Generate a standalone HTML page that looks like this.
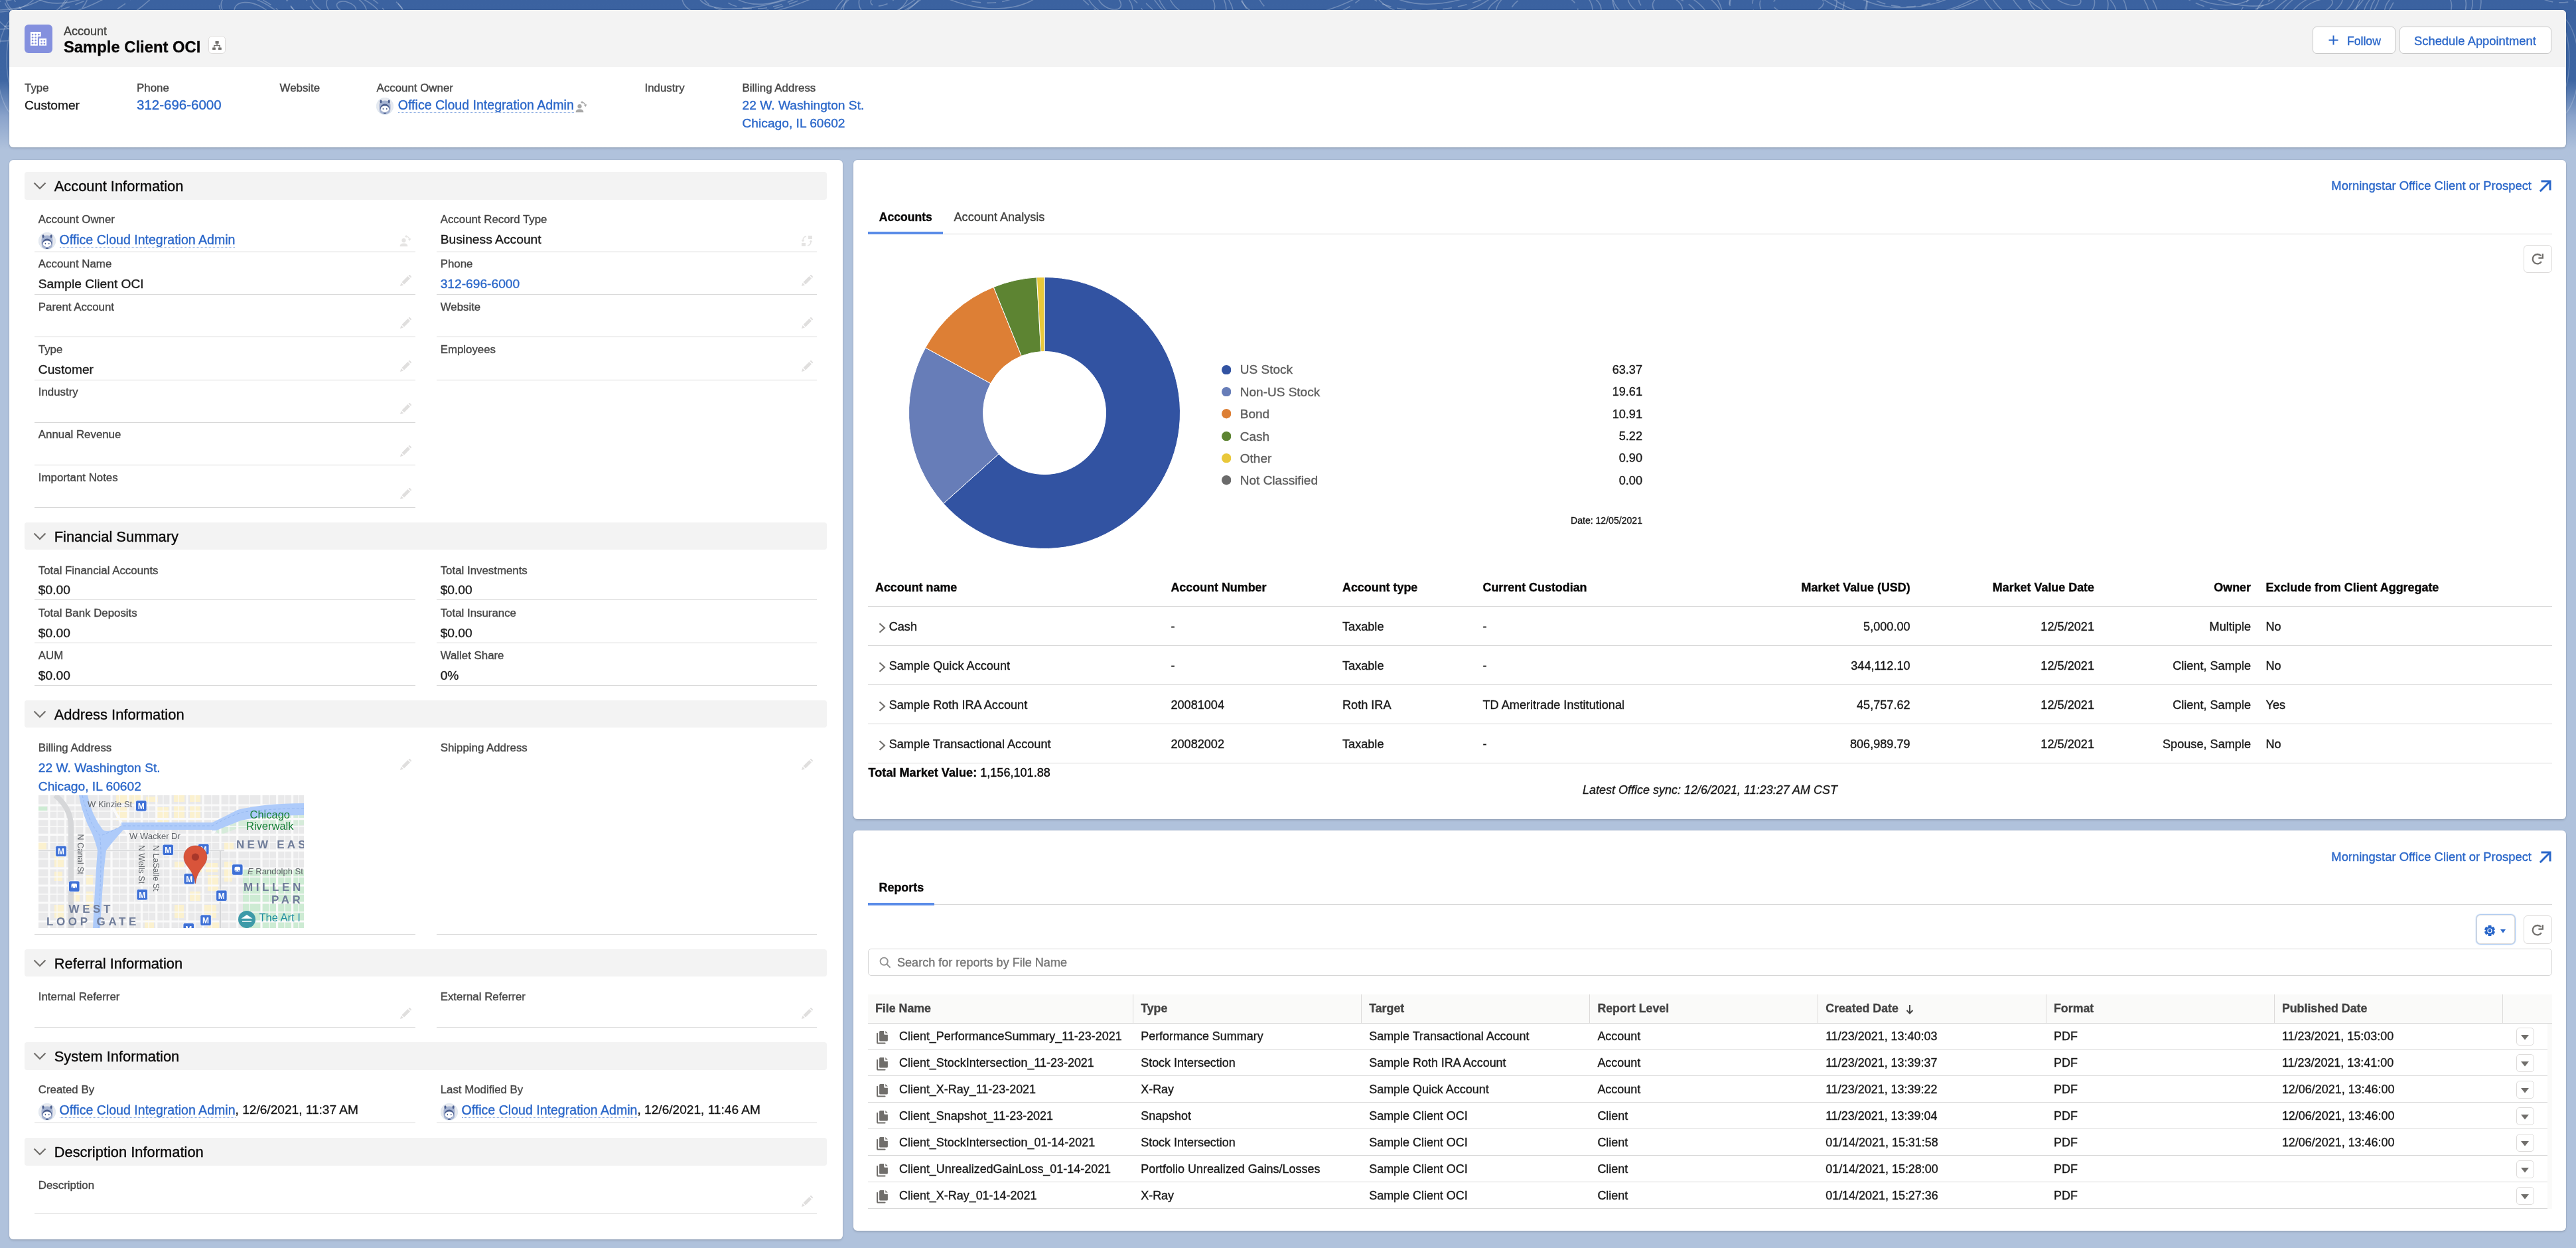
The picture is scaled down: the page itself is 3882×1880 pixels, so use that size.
<!DOCTYPE html><html><head><meta charset="utf-8"><style>
html,body{margin:0;padding:0;}
body{width:3882px;height:1880px;overflow:hidden;position:relative;font-family:"Liberation Sans",sans-serif;
background:linear-gradient(180deg,#3b62a0 0px,#3d65a2 120px,#8aa3cb 175px,#b0c2dc 225px,#b0c2dc 1880px);}
.r{position:absolute;}
.t{position:absolute;white-space:nowrap;-webkit-text-stroke:0.35px currentColor;}
.card{position:absolute;background:#fff;border-radius:6px;box-shadow:0 0 0 1px rgba(0,0,0,0.05),0 2px 3px rgba(0,0,0,0.12);}
</style></head><body><div id="wrap" style="position:absolute;left:0;top:0;width:3882px;height:1880px;will-change:transform;">
<svg class="r" style="left:0px;top:0px;" width="3882" height="240" viewBox="0 0 3882 240"><ellipse cx="0" cy="-15" rx="40" ry="17" transform="rotate(-3 0 -15)" fill="none" stroke="rgba(255,255,255,0.26)" stroke-width="1.6" stroke-dasharray="14 9"/><ellipse cx="0" cy="-15" rx="58" ry="33" transform="rotate(-3 0 -15)" fill="none" stroke="rgba(255,255,255,0.26)" stroke-width="1.6"/><ellipse cx="0" cy="-15" rx="75" ry="30" transform="rotate(-3 0 -15)" fill="none" stroke="rgba(255,255,255,0.26)" stroke-width="1.6"/><ellipse cx="0" cy="-15" rx="104" ry="59" transform="rotate(-3 0 -15)" fill="none" stroke="rgba(255,255,255,0.26)" stroke-width="1.6"/><ellipse cx="0" cy="-15" rx="109" ry="55" transform="rotate(-3 0 -15)" fill="none" stroke="rgba(255,255,255,0.26)" stroke-width="1.6" stroke-dasharray="14 9"/><ellipse cx="0" cy="-15" rx="136" ry="77" transform="rotate(-3 0 -15)" fill="none" stroke="rgba(255,255,255,0.26)" stroke-width="1.6" stroke-dasharray="14 9"/><ellipse cx="129" cy="-56" rx="55" ry="28" transform="rotate(-28 129 -56)" fill="none" stroke="rgba(255,255,255,0.26)" stroke-width="1.6" stroke-dasharray="14 9"/><ellipse cx="129" cy="-56" rx="73" ry="42" transform="rotate(-28 129 -56)" fill="none" stroke="rgba(255,255,255,0.26)" stroke-width="1.6"/><ellipse cx="129" cy="-56" rx="93" ry="48" transform="rotate(-28 129 -56)" fill="none" stroke="rgba(255,255,255,0.26)" stroke-width="1.6"/><ellipse cx="129" cy="-56" rx="121" ry="84" transform="rotate(-28 129 -56)" fill="none" stroke="rgba(255,255,255,0.26)" stroke-width="1.6" stroke-dasharray="14 9"/><ellipse cx="129" cy="-56" rx="133" ry="61" transform="rotate(-28 129 -56)" fill="none" stroke="rgba(255,255,255,0.26)" stroke-width="1.6"/><ellipse cx="129" cy="-56" rx="136" ry="51" transform="rotate(-28 129 -56)" fill="none" stroke="rgba(255,255,255,0.26)" stroke-width="1.6" stroke-dasharray="14 9"/><ellipse cx="129" cy="-56" rx="158" ry="102" transform="rotate(-28 129 -56)" fill="none" stroke="rgba(255,255,255,0.26)" stroke-width="1.6"/><ellipse cx="383" cy="25" rx="15" ry="7" transform="rotate(26 383 25)" fill="none" stroke="rgba(255,255,255,0.26)" stroke-width="1.6" stroke-dasharray="14 9"/><ellipse cx="383" cy="25" rx="32" ry="18" transform="rotate(26 383 25)" fill="none" stroke="rgba(255,255,255,0.26)" stroke-width="1.6"/><ellipse cx="383" cy="25" rx="54" ry="25" transform="rotate(26 383 25)" fill="none" stroke="rgba(255,255,255,0.26)" stroke-width="1.6"/><ellipse cx="383" cy="25" rx="57" ry="28" transform="rotate(26 383 25)" fill="none" stroke="rgba(255,255,255,0.26)" stroke-width="1.6" stroke-dasharray="14 9"/><ellipse cx="522" cy="11" rx="15" ry="8" transform="rotate(18 522 11)" fill="none" stroke="rgba(255,255,255,0.26)" stroke-width="1.6"/><ellipse cx="522" cy="11" rx="31" ry="19" transform="rotate(18 522 11)" fill="none" stroke="rgba(255,255,255,0.26)" stroke-width="1.6"/><ellipse cx="522" cy="11" rx="54" ry="21" transform="rotate(18 522 11)" fill="none" stroke="rgba(255,255,255,0.26)" stroke-width="1.6"/><ellipse cx="522" cy="11" rx="63" ry="28" transform="rotate(18 522 11)" fill="none" stroke="rgba(255,255,255,0.26)" stroke-width="1.6" stroke-dasharray="14 9"/><ellipse cx="522" cy="11" rx="97" ry="44" transform="rotate(18 522 11)" fill="none" stroke="rgba(255,255,255,0.26)" stroke-width="1.6" stroke-dasharray="14 9"/><ellipse cx="522" cy="11" rx="94" ry="46" transform="rotate(18 522 11)" fill="none" stroke="rgba(255,255,255,0.26)" stroke-width="1.6" stroke-dasharray="14 9"/><ellipse cx="732" cy="-50" rx="60" ry="34" transform="rotate(-4 732 -50)" fill="none" stroke="rgba(255,255,255,0.26)" stroke-width="1.6" stroke-dasharray="14 9"/><ellipse cx="732" cy="-50" rx="77" ry="29" transform="rotate(-4 732 -50)" fill="none" stroke="rgba(255,255,255,0.26)" stroke-width="1.6"/><ellipse cx="732" cy="-50" rx="98" ry="35" transform="rotate(-4 732 -50)" fill="none" stroke="rgba(255,255,255,0.26)" stroke-width="1.6"/><ellipse cx="732" cy="-50" rx="116" ry="46" transform="rotate(-4 732 -50)" fill="none" stroke="rgba(255,255,255,0.26)" stroke-width="1.6"/><ellipse cx="968" cy="-46" rx="32" ry="18" transform="rotate(-11 968 -46)" fill="none" stroke="rgba(255,255,255,0.26)" stroke-width="1.6" stroke-dasharray="14 9"/><ellipse cx="968" cy="-46" rx="48" ry="27" transform="rotate(-11 968 -46)" fill="none" stroke="rgba(255,255,255,0.26)" stroke-width="1.6"/><ellipse cx="968" cy="-46" rx="71" ry="35" transform="rotate(-11 968 -46)" fill="none" stroke="rgba(255,255,255,0.26)" stroke-width="1.6"/><ellipse cx="968" cy="-46" rx="76" ry="28" transform="rotate(-11 968 -46)" fill="none" stroke="rgba(255,255,255,0.26)" stroke-width="1.6"/><ellipse cx="1160" cy="-34" rx="48" ry="27" transform="rotate(-15 1160 -34)" fill="none" stroke="rgba(255,255,255,0.26)" stroke-width="1.6"/><ellipse cx="1160" cy="-34" rx="64" ry="38" transform="rotate(-15 1160 -34)" fill="none" stroke="rgba(255,255,255,0.26)" stroke-width="1.6"/><ellipse cx="1160" cy="-34" rx="80" ry="44" transform="rotate(-15 1160 -34)" fill="none" stroke="rgba(255,255,255,0.26)" stroke-width="1.6" stroke-dasharray="14 9"/><ellipse cx="1160" cy="-34" rx="105" ry="47" transform="rotate(-15 1160 -34)" fill="none" stroke="rgba(255,255,255,0.26)" stroke-width="1.6" stroke-dasharray="14 9"/><ellipse cx="1160" cy="-34" rx="111" ry="39" transform="rotate(-15 1160 -34)" fill="none" stroke="rgba(255,255,255,0.26)" stroke-width="1.6"/><ellipse cx="1160" cy="-34" rx="136" ry="51" transform="rotate(-15 1160 -34)" fill="none" stroke="rgba(255,255,255,0.26)" stroke-width="1.6"/><ellipse cx="1332" cy="-3" rx="21" ry="10" transform="rotate(-22 1332 -3)" fill="none" stroke="rgba(255,255,255,0.26)" stroke-width="1.6" stroke-dasharray="14 9"/><ellipse cx="1332" cy="-3" rx="39" ry="27" transform="rotate(-22 1332 -3)" fill="none" stroke="rgba(255,255,255,0.26)" stroke-width="1.6"/><ellipse cx="1332" cy="-3" rx="64" ry="33" transform="rotate(-22 1332 -3)" fill="none" stroke="rgba(255,255,255,0.26)" stroke-width="1.6"/><ellipse cx="1332" cy="-3" rx="70" ry="25" transform="rotate(-22 1332 -3)" fill="none" stroke="rgba(255,255,255,0.26)" stroke-width="1.6"/><ellipse cx="1332" cy="-3" rx="79" ry="30" transform="rotate(-22 1332 -3)" fill="none" stroke="rgba(255,255,255,0.26)" stroke-width="1.6"/><ellipse cx="1471" cy="-53" rx="35" ry="22" transform="rotate(14 1471 -53)" fill="none" stroke="rgba(255,255,255,0.26)" stroke-width="1.6" stroke-dasharray="14 9"/><ellipse cx="1471" cy="-53" rx="56" ry="37" transform="rotate(14 1471 -53)" fill="none" stroke="rgba(255,255,255,0.26)" stroke-width="1.6"/><ellipse cx="1471" cy="-53" rx="74" ry="49" transform="rotate(14 1471 -53)" fill="none" stroke="rgba(255,255,255,0.26)" stroke-width="1.6" stroke-dasharray="14 9"/><ellipse cx="1471" cy="-53" rx="87" ry="55" transform="rotate(14 1471 -53)" fill="none" stroke="rgba(255,255,255,0.26)" stroke-width="1.6" stroke-dasharray="14 9"/><ellipse cx="1471" cy="-53" rx="110" ry="62" transform="rotate(14 1471 -53)" fill="none" stroke="rgba(255,255,255,0.26)" stroke-width="1.6"/><ellipse cx="1672" cy="1" rx="19" ry="11" transform="rotate(30 1672 1)" fill="none" stroke="rgba(255,255,255,0.26)" stroke-width="1.6"/><ellipse cx="1672" cy="1" rx="38" ry="21" transform="rotate(30 1672 1)" fill="none" stroke="rgba(255,255,255,0.26)" stroke-width="1.6"/><ellipse cx="1672" cy="1" rx="60" ry="23" transform="rotate(30 1672 1)" fill="none" stroke="rgba(255,255,255,0.26)" stroke-width="1.6" stroke-dasharray="14 9"/><ellipse cx="1796" cy="0" rx="37" ry="23" transform="rotate(27 1796 0)" fill="none" stroke="rgba(255,255,255,0.26)" stroke-width="1.6"/><ellipse cx="1796" cy="0" rx="55" ry="36" transform="rotate(27 1796 0)" fill="none" stroke="rgba(255,255,255,0.26)" stroke-width="1.6"/><ellipse cx="1796" cy="0" rx="67" ry="38" transform="rotate(27 1796 0)" fill="none" stroke="rgba(255,255,255,0.26)" stroke-width="1.6"/><ellipse cx="1796" cy="0" rx="97" ry="45" transform="rotate(27 1796 0)" fill="none" stroke="rgba(255,255,255,0.26)" stroke-width="1.6" stroke-dasharray="14 9"/><ellipse cx="1986" cy="-36" rx="33" ry="21" transform="rotate(-18 1986 -36)" fill="none" stroke="rgba(255,255,255,0.26)" stroke-width="1.6" stroke-dasharray="14 9"/><ellipse cx="1986" cy="-36" rx="54" ry="26" transform="rotate(-18 1986 -36)" fill="none" stroke="rgba(255,255,255,0.26)" stroke-width="1.6"/><ellipse cx="1986" cy="-36" rx="66" ry="26" transform="rotate(-18 1986 -36)" fill="none" stroke="rgba(255,255,255,0.26)" stroke-width="1.6"/><ellipse cx="1986" cy="-36" rx="95" ry="62" transform="rotate(-18 1986 -36)" fill="none" stroke="rgba(255,255,255,0.26)" stroke-width="1.6" stroke-dasharray="14 9"/><ellipse cx="1986" cy="-36" rx="120" ry="53" transform="rotate(-18 1986 -36)" fill="none" stroke="rgba(255,255,255,0.26)" stroke-width="1.6"/><ellipse cx="2169" cy="-32" rx="25" ry="14" transform="rotate(-7 2169 -32)" fill="none" stroke="rgba(255,255,255,0.26)" stroke-width="1.6" stroke-dasharray="14 9"/><ellipse cx="2169" cy="-32" rx="45" ry="26" transform="rotate(-7 2169 -32)" fill="none" stroke="rgba(255,255,255,0.26)" stroke-width="1.6"/><ellipse cx="2169" cy="-32" rx="66" ry="29" transform="rotate(-7 2169 -32)" fill="none" stroke="rgba(255,255,255,0.26)" stroke-width="1.6"/><ellipse cx="2169" cy="-32" rx="83" ry="37" transform="rotate(-7 2169 -32)" fill="none" stroke="rgba(255,255,255,0.26)" stroke-width="1.6"/><ellipse cx="2169" cy="-32" rx="101" ry="56" transform="rotate(-7 2169 -32)" fill="none" stroke="rgba(255,255,255,0.26)" stroke-width="1.6"/><ellipse cx="2169" cy="-32" rx="111" ry="46" transform="rotate(-7 2169 -32)" fill="none" stroke="rgba(255,255,255,0.26)" stroke-width="1.6" stroke-dasharray="14 9"/><ellipse cx="2327" cy="18" rx="51" ry="29" transform="rotate(-3 2327 18)" fill="none" stroke="rgba(255,255,255,0.26)" stroke-width="1.6" stroke-dasharray="14 9"/><ellipse cx="2327" cy="18" rx="73" ry="43" transform="rotate(-3 2327 18)" fill="none" stroke="rgba(255,255,255,0.26)" stroke-width="1.6"/><ellipse cx="2327" cy="18" rx="86" ry="36" transform="rotate(-3 2327 18)" fill="none" stroke="rgba(255,255,255,0.26)" stroke-width="1.6"/><ellipse cx="2513" cy="11" rx="23" ry="16" transform="rotate(17 2513 11)" fill="none" stroke="rgba(255,255,255,0.26)" stroke-width="1.6"/><ellipse cx="2513" cy="11" rx="45" ry="18" transform="rotate(17 2513 11)" fill="none" stroke="rgba(255,255,255,0.26)" stroke-width="1.6" stroke-dasharray="14 9"/><ellipse cx="2513" cy="11" rx="62" ry="27" transform="rotate(17 2513 11)" fill="none" stroke="rgba(255,255,255,0.26)" stroke-width="1.6"/><ellipse cx="2513" cy="11" rx="86" ry="42" transform="rotate(17 2513 11)" fill="none" stroke="rgba(255,255,255,0.26)" stroke-width="1.6"/><ellipse cx="2513" cy="11" rx="85" ry="56" transform="rotate(17 2513 11)" fill="none" stroke="rgba(255,255,255,0.26)" stroke-width="1.6"/><ellipse cx="2710" cy="5" rx="38" ry="16" transform="rotate(-2 2710 5)" fill="none" stroke="rgba(255,255,255,0.26)" stroke-width="1.6" stroke-dasharray="14 9"/><ellipse cx="2710" cy="5" rx="58" ry="33" transform="rotate(-2 2710 5)" fill="none" stroke="rgba(255,255,255,0.26)" stroke-width="1.6" stroke-dasharray="14 9"/><ellipse cx="2710" cy="5" rx="69" ry="46" transform="rotate(-2 2710 5)" fill="none" stroke="rgba(255,255,255,0.26)" stroke-width="1.6" stroke-dasharray="14 9"/><ellipse cx="2710" cy="5" rx="103" ry="55" transform="rotate(-2 2710 5)" fill="none" stroke="rgba(255,255,255,0.26)" stroke-width="1.6" stroke-dasharray="14 9"/><ellipse cx="2710" cy="5" rx="104" ry="69" transform="rotate(-2 2710 5)" fill="none" stroke="rgba(255,255,255,0.26)" stroke-width="1.6" stroke-dasharray="14 9"/><ellipse cx="2878" cy="-52" rx="35" ry="23" transform="rotate(-5 2878 -52)" fill="none" stroke="rgba(255,255,255,0.26)" stroke-width="1.6"/><ellipse cx="2878" cy="-52" rx="56" ry="28" transform="rotate(-5 2878 -52)" fill="none" stroke="rgba(255,255,255,0.26)" stroke-width="1.6"/><ellipse cx="2878" cy="-52" rx="71" ry="42" transform="rotate(-5 2878 -52)" fill="none" stroke="rgba(255,255,255,0.26)" stroke-width="1.6" stroke-dasharray="14 9"/><ellipse cx="2878" cy="-52" rx="88" ry="62" transform="rotate(-5 2878 -52)" fill="none" stroke="rgba(255,255,255,0.26)" stroke-width="1.6" stroke-dasharray="14 9"/><ellipse cx="2878" cy="-52" rx="107" ry="63" transform="rotate(-5 2878 -52)" fill="none" stroke="rgba(255,255,255,0.26)" stroke-width="1.6"/><ellipse cx="2878" cy="-52" rx="140" ry="77" transform="rotate(-5 2878 -52)" fill="none" stroke="rgba(255,255,255,0.26)" stroke-width="1.6"/><ellipse cx="2878" cy="-52" rx="155" ry="78" transform="rotate(-5 2878 -52)" fill="none" stroke="rgba(255,255,255,0.26)" stroke-width="1.6"/><ellipse cx="3115" cy="-4" rx="22" ry="10" transform="rotate(21 3115 -4)" fill="none" stroke="rgba(255,255,255,0.26)" stroke-width="1.6"/><ellipse cx="3115" cy="-4" rx="43" ry="29" transform="rotate(21 3115 -4)" fill="none" stroke="rgba(255,255,255,0.26)" stroke-width="1.6"/><ellipse cx="3115" cy="-4" rx="64" ry="44" transform="rotate(21 3115 -4)" fill="none" stroke="rgba(255,255,255,0.26)" stroke-width="1.6"/><ellipse cx="3115" cy="-4" rx="78" ry="33" transform="rotate(21 3115 -4)" fill="none" stroke="rgba(255,255,255,0.26)" stroke-width="1.6"/><ellipse cx="3115" cy="-4" rx="94" ry="53" transform="rotate(21 3115 -4)" fill="none" stroke="rgba(255,255,255,0.26)" stroke-width="1.6"/><ellipse cx="3115" cy="-4" rx="131" ry="70" transform="rotate(21 3115 -4)" fill="none" stroke="rgba(255,255,255,0.26)" stroke-width="1.6"/><ellipse cx="3115" cy="-4" rx="145" ry="79" transform="rotate(21 3115 -4)" fill="none" stroke="rgba(255,255,255,0.26)" stroke-width="1.6"/><ellipse cx="3332" cy="-53" rx="39" ry="19" transform="rotate(25 3332 -53)" fill="none" stroke="rgba(255,255,255,0.26)" stroke-width="1.6"/><ellipse cx="3332" cy="-53" rx="57" ry="27" transform="rotate(25 3332 -53)" fill="none" stroke="rgba(255,255,255,0.26)" stroke-width="1.6" stroke-dasharray="14 9"/><ellipse cx="3332" cy="-53" rx="82" ry="55" transform="rotate(25 3332 -53)" fill="none" stroke="rgba(255,255,255,0.26)" stroke-width="1.6"/><ellipse cx="3332" cy="-53" rx="84" ry="42" transform="rotate(25 3332 -53)" fill="none" stroke="rgba(255,255,255,0.26)" stroke-width="1.6"/><ellipse cx="3332" cy="-53" rx="104" ry="62" transform="rotate(25 3332 -53)" fill="none" stroke="rgba(255,255,255,0.26)" stroke-width="1.6" stroke-dasharray="14 9"/><ellipse cx="3332" cy="-53" rx="111" ry="45" transform="rotate(25 3332 -53)" fill="none" stroke="rgba(255,255,255,0.26)" stroke-width="1.6"/><ellipse cx="3491" cy="12" rx="26" ry="10" transform="rotate(-24 3491 12)" fill="none" stroke="rgba(255,255,255,0.26)" stroke-width="1.6"/><ellipse cx="3491" cy="12" rx="42" ry="18" transform="rotate(-24 3491 12)" fill="none" stroke="rgba(255,255,255,0.26)" stroke-width="1.6"/><ellipse cx="3491" cy="12" rx="61" ry="29" transform="rotate(-24 3491 12)" fill="none" stroke="rgba(255,255,255,0.26)" stroke-width="1.6"/><ellipse cx="3491" cy="12" rx="81" ry="33" transform="rotate(-24 3491 12)" fill="none" stroke="rgba(255,255,255,0.26)" stroke-width="1.6"/><ellipse cx="3491" cy="12" rx="102" ry="59" transform="rotate(-24 3491 12)" fill="none" stroke="rgba(255,255,255,0.26)" stroke-width="1.6"/><ellipse cx="3491" cy="12" rx="130" ry="73" transform="rotate(-24 3491 12)" fill="none" stroke="rgba(255,255,255,0.26)" stroke-width="1.6" stroke-dasharray="14 9"/><ellipse cx="3644" cy="14" rx="51" ry="35" transform="rotate(-11 3644 14)" fill="none" stroke="rgba(255,255,255,0.26)" stroke-width="1.6"/><ellipse cx="3644" cy="14" rx="73" ry="49" transform="rotate(-11 3644 14)" fill="none" stroke="rgba(255,255,255,0.26)" stroke-width="1.6"/><ellipse cx="3644" cy="14" rx="83" ry="50" transform="rotate(-11 3644 14)" fill="none" stroke="rgba(255,255,255,0.26)" stroke-width="1.6"/><ellipse cx="3644" cy="14" rx="96" ry="61" transform="rotate(-11 3644 14)" fill="none" stroke="rgba(255,255,255,0.26)" stroke-width="1.6"/><ellipse cx="3875" cy="-47" rx="33" ry="16" transform="rotate(-24 3875 -47)" fill="none" stroke="rgba(255,255,255,0.26)" stroke-width="1.6" stroke-dasharray="14 9"/><ellipse cx="3875" cy="-47" rx="50" ry="30" transform="rotate(-24 3875 -47)" fill="none" stroke="rgba(255,255,255,0.26)" stroke-width="1.6"/><ellipse cx="3875" cy="-47" rx="67" ry="47" transform="rotate(-24 3875 -47)" fill="none" stroke="rgba(255,255,255,0.26)" stroke-width="1.6" stroke-dasharray="14 9"/><ellipse cx="30" cy="90" rx="20" ry="60" fill="none" stroke="rgba(255,255,255,0.2)" stroke-width="1.5"/><ellipse cx="30" cy="100" rx="34" ry="78" fill="none" stroke="rgba(255,255,255,0.2)" stroke-width="1.5"/><ellipse cx="3852" cy="90" rx="20" ry="60" fill="none" stroke="rgba(255,255,255,0.2)" stroke-width="1.5"/><ellipse cx="3852" cy="100" rx="34" ry="78" fill="none" stroke="rgba(255,255,255,0.2)" stroke-width="1.5"/></svg>
<div class="card" style="left:14px;top:15px;width:3853px;height:207px;overflow:hidden;"><div style="position:absolute;left:0;top:0;right:0;height:86px;background:#f3f3f3;"></div></div>
<svg class="r" style="left:37px;top:37px;" width="42" height="43" viewBox="0 0 42 43"><rect x="0" y="0" width="42" height="43" rx="6" fill="#8490de"/><path d="M8.9 11 H24.7 V18 H19.9 V31.7 H8.9Z" fill="#fff"/><rect x="22.1" y="20.9" width="11" height="10.8" fill="#fff"/><circle cx="12.1" cy="15.1" r="1.35" fill="#8490de"/><circle cx="16.65" cy="15.1" r="1.35" fill="#8490de"/><circle cx="21.4" cy="15.1" r="1.35" fill="#8490de"/><circle cx="12.1" cy="19.5" r="1.35" fill="#8490de"/><circle cx="16.65" cy="19.5" r="1.35" fill="#8490de"/><circle cx="12.1" cy="23.9" r="1.35" fill="#8490de"/><circle cx="16.65" cy="23.9" r="1.35" fill="#8490de"/><circle cx="12.1" cy="28.3" r="1.35" fill="#8490de"/><circle cx="16.65" cy="28.3" r="1.35" fill="#8490de"/><circle cx="25.6" cy="24.5" r="1.35" fill="#8490de"/><circle cx="29.9" cy="24.5" r="1.35" fill="#8490de"/><circle cx="25.6" cy="28.8" r="1.35" fill="#8490de"/><circle cx="29.9" cy="28.8" r="1.35" fill="#8490de"/></svg>
<div class="t " style="left:96px;top:36.76px;font-size:18px;line-height:21.6px;color:#3e3e3c;">Account</div>
<div class="t " style="left:96px;top:57.27px;font-size:23.8px;line-height:28.56px;color:#080707;font-weight:bold;">Sample Client OCI</div>
<svg class="r" style="left:314px;top:54px;" width="26" height="27" viewBox="0 0 26 27"><rect x="0.5" y="0.5" width="25" height="26" rx="5" fill="#fff" stroke="#dddbda"/><g fill="#706e6b"><rect x="10.5" y="7.9" width="5.2" height="3.9" rx="0.6"/><rect x="6.1" y="17.4" width="4.8" height="3.6" rx="0.6"/><rect x="15" y="17.4" width="4.8" height="3.6" rx="0.6"/><rect x="12.3" y="11.5" width="1.5" height="2.6"/><rect x="8" y="13.9" width="9.8" height="1.4"/><rect x="8" y="13.9" width="1.4" height="3.6"/><rect x="16.4" y="13.9" width="1.4" height="3.6"/></g></svg>
<div class="r" style="left:3485px;top:40px;width:125px;height:41px;border:1px solid #c9c9c9;border-radius:6px;background:#fff;box-sizing:border-box;"></div>
<svg class="r" style="left:3508px;top:52px;" width="17" height="17" viewBox="0 0 17 17"><path d="M8.5 1.5v14M1.5 8.5h14" stroke="#2966c9" stroke-width="2"/></svg>
<div class="t " style="left:3537px;top:52.14px;font-size:17.6px;line-height:21.12px;color:#2966c9;">Follow</div>
<div class="r" style="left:3616px;top:40px;width:229px;height:41px;border:1px solid #c9c9c9;border-radius:6px;background:#fff;box-sizing:border-box;"></div>
<div class="t " style="left:3638px;top:51.42px;font-size:18.36px;line-height:22.03px;color:#2966c9;">Schedule Appointment</div>
<div class="t " style="left:37px;top:122.8px;font-size:16.9px;line-height:20.28px;color:#444444;">Type</div>
<div class="t " style="left:37px;top:147.67px;font-size:19.15px;line-height:22.98px;color:#181818;">Customer</div>
<div class="t " style="left:206px;top:122.8px;font-size:16.9px;line-height:20.28px;color:#444444;">Phone</div>
<div class="t " style="left:206px;top:146.4px;font-size:20.5px;line-height:24.6px;color:#2966c9;">312-696-6000</div>
<div class="t " style="left:421.5px;top:122.8px;font-size:16.9px;line-height:20.28px;color:#444444;">Website</div>
<div class="t " style="left:421.5px;top:147.67px;font-size:19.15px;line-height:22.98px;color:#181818;"></div>
<div class="t " style="left:567.5px;top:122.8px;font-size:16.9px;line-height:20.28px;color:#444444;">Account Owner</div>
<div class="t " style="left:971.5px;top:122.8px;font-size:16.9px;line-height:20.28px;color:#444444;">Industry</div>
<div class="t " style="left:971.5px;top:147.67px;font-size:19.15px;line-height:22.98px;color:#181818;"></div>
<div class="t " style="left:1118.5px;top:122.8px;font-size:16.9px;line-height:20.28px;color:#444444;">Billing Address</div>
<div class="t " style="left:1118.5px;top:146.83px;font-size:19.2px;line-height:23.04px;color:#2966c9;">22 W. Washington St.</div>
<div class="t " style="left:1118.5px;top:173.93px;font-size:19.2px;line-height:23.04px;color:#2966c9;">Chicago, IL 60602</div>
<svg class="r" style="left:567px;top:147px;" width="26" height="26" viewBox="0 0 26 26"><circle cx="13" cy="13" r="12.8" fill="#e6e9ef" stroke="#d5e3ee" stroke-width="0.5"/><path d="M4.5 11 Q4.5 4.5 13 4.5 Q21.5 4.5 21.5 11 L21.5 17 Q21.5 25 13 25 Q4.5 25 4.5 17Z" fill="#a6b4d2"/><ellipse cx="7" cy="5.8" rx="1.6" ry="2.6" fill="#4c5f8f"/><ellipse cx="19.2" cy="5.8" rx="1.6" ry="2.6" fill="#4c5f8f"/><ellipse cx="13" cy="16" rx="7" ry="6.5" fill="#4c5f8f"/><ellipse cx="13" cy="17.3" rx="6.3" ry="4.9" fill="#fff"/><ellipse cx="10.4" cy="17" rx="0.8" ry="1.2" fill="#4c5f8f"/><ellipse cx="15.8" cy="17" rx="0.8" ry="1.2" fill="#4c5f8f"/><path d="M10.5 25 Q13 21.5 15.5 25Z" fill="#4c5f8f"/></svg>
<div class="t " style="left:599.8px;top:147.28px;font-size:19.57px;line-height:23.48px;color:#2966c9;"><span style="border-bottom:1px dotted rgba(41,102,201,0.55);">Office Cloud Integration Admin</span></div>
<div class="card" style="left:14px;top:241px;width:1256px;height:1626px;"></div>
<svg class="r" style="left:866.5px;top:151.5px;" width="18" height="18" viewBox="0 0 18 18"><circle cx="6.5" cy="8.2" r="3.1" fill="#a8a8a8"/><path d="M0.6 17.2 Q0.6 12.6 6.5 12.6 Q12.4 12.6 12.4 17.2Z" fill="#a8a8a8"/><path d="M9.6 2 Q13.8 2.2 15.2 6.6" fill="none" stroke="#a8a8a8" stroke-width="1.7"/><path d="M12.9 6 L15.6 9 L17.4 5.3Z" fill="#a8a8a8"/><path d="M8 2.1 L10.6 -0.2 L10.6 4.3Z" fill="#a8a8a8"/></svg>
<div class="r" style="left:37px;top:259px;width:1209px;height:41.6px;background:#f3f3f3;border-radius:4px;"></div>
<svg class="r" style="left:50px;top:274px;display:none" width="20" height="13" viewBox="0 0 20 13"></svg>
<svg class="r" style="left:50px;top:273.8px;" width="20" height="13" viewBox="0 0 20 13"><path d="M1.5 1.5 L10 10 L18.5 1.5" fill="none" stroke="#706e6b" stroke-width="2.2"/></svg>
<div class="t " style="left:81.7px;top:267.77px;font-size:21.9px;line-height:26.28px;color:#080707;">Account Information</div>
<div class="r" style="left:52px;top:379px;width:574px;height:1px;background:#d8d8d8;"></div>
<div class="t " style="left:57.8px;top:320.95px;font-size:16.85px;line-height:20.22px;color:#444444;">Account Owner</div>
<svg class="r" style="left:57.9px;top:350px;" width="26" height="26" viewBox="0 0 26 26"><circle cx="13" cy="13" r="12.8" fill="#e6e9ef" stroke="#d5e3ee" stroke-width="0.5"/><path d="M4.5 11 Q4.5 4.5 13 4.5 Q21.5 4.5 21.5 11 L21.5 17 Q21.5 25 13 25 Q4.5 25 4.5 17Z" fill="#a6b4d2"/><ellipse cx="7" cy="5.8" rx="1.6" ry="2.6" fill="#4c5f8f"/><ellipse cx="19.2" cy="5.8" rx="1.6" ry="2.6" fill="#4c5f8f"/><ellipse cx="13" cy="16" rx="7" ry="6.5" fill="#4c5f8f"/><ellipse cx="13" cy="17.3" rx="6.3" ry="4.9" fill="#fff"/><ellipse cx="10.4" cy="17" rx="0.8" ry="1.2" fill="#4c5f8f"/><ellipse cx="15.8" cy="17" rx="0.8" ry="1.2" fill="#4c5f8f"/><path d="M10.5 25 Q13 21.5 15.5 25Z" fill="#4c5f8f"/></svg>
<div class="t " style="left:89.5px;top:349.78px;font-size:19.57px;line-height:23.48px;color:#2966c9;"><span style="border-bottom:1px dotted rgba(41,102,201,0.55);">Office Cloud Integration Admin</span></div>
<svg class="r" style="left:602px;top:353.5px;" width="18" height="18" viewBox="0 0 18 18"><circle cx="6.5" cy="8.2" r="3.1" fill="#e5e4e3"/><path d="M0.6 17.2 Q0.6 12.6 6.5 12.6 Q12.4 12.6 12.4 17.2Z" fill="#e5e4e3"/><path d="M9.6 2 Q13.8 2.2 15.2 6.6" fill="none" stroke="#e5e4e3" stroke-width="1.7"/><path d="M12.9 6 L15.6 9 L17.4 5.3Z" fill="#e5e4e3"/><path d="M8 2.1 L10.6 -0.2 L10.6 4.3Z" fill="#e5e4e3"/></svg>
<div class="r" style="left:658px;top:379px;width:573px;height:1px;background:#d8d8d8;"></div>
<div class="t " style="left:663.7px;top:320.95px;font-size:16.85px;line-height:20.22px;color:#444444;">Account Record Type</div>
<div class="t " style="left:663.7px;top:348.97px;font-size:19.26px;line-height:23.11px;color:#181818;">Business Account</div>
<svg class="r" style="left:1206.5px;top:353.5px;" width="18" height="18" viewBox="0 0 18 18"><rect x="11" y="1" width="6" height="5" fill="#e5e4e3"/><rect x="1" y="12" width="6" height="5" fill="#e5e4e3"/><path d="M8 2 Q3 3 3 8" fill="none" stroke="#e5e4e3" stroke-width="1.5"/><path d="M0.5 7.5 L3 10.5 L5.5 7.5Z" fill="#e5e4e3"/><path d="M10 16 Q15 15 15 10" fill="none" stroke="#e5e4e3" stroke-width="1.5"/><path d="M12.5 10.5 L15 7.5 L17.5 10.5Z" fill="#e5e4e3"/></svg>
<div class="r" style="left:52px;top:443px;width:574px;height:1px;background:#d8d8d8;"></div>
<div class="t " style="left:57.8px;top:388.45px;font-size:16.85px;line-height:20.22px;color:#444444;">Account Name</div>
<div class="t " style="left:57.8px;top:416.43px;font-size:19.2px;line-height:23.04px;color:#181818;">Sample Client OCI</div>
<svg class="r" style="left:602px;top:413.7px;" width="18" height="18" viewBox="0 0 18 18"><path d="M1 17 L2.5 12 L6 15.5 Z" fill="#e0dfde"/><path d="M3.5 11 L12.5 2 L16 5.5 L7 14.5 Z" fill="#e0dfde"/><path d="M13.5 1 L15 -0.5 L18.5 3 L17 4.5Z" fill="#e0dfde"/></svg>
<div class="r" style="left:52px;top:507px;width:574px;height:1px;background:#d8d8d8;"></div>
<div class="t " style="left:57.8px;top:452.75px;font-size:16.85px;line-height:20.22px;color:#444444;">Parent Account</div>
<svg class="r" style="left:602px;top:478.0px;" width="18" height="18" viewBox="0 0 18 18"><path d="M1 17 L2.5 12 L6 15.5 Z" fill="#e0dfde"/><path d="M3.5 11 L12.5 2 L16 5.5 L7 14.5 Z" fill="#e0dfde"/><path d="M13.5 1 L15 -0.5 L18.5 3 L17 4.5Z" fill="#e0dfde"/></svg>
<div class="r" style="left:52px;top:572px;width:574px;height:1px;background:#d8d8d8;"></div>
<div class="t " style="left:57.8px;top:517.25px;font-size:16.85px;line-height:20.22px;color:#444444;">Type</div>
<div class="t " style="left:57.8px;top:545.23px;font-size:19.2px;line-height:23.04px;color:#181818;">Customer</div>
<svg class="r" style="left:602px;top:542.5px;" width="18" height="18" viewBox="0 0 18 18"><path d="M1 17 L2.5 12 L6 15.5 Z" fill="#e0dfde"/><path d="M3.5 11 L12.5 2 L16 5.5 L7 14.5 Z" fill="#e0dfde"/><path d="M13.5 1 L15 -0.5 L18.5 3 L17 4.5Z" fill="#e0dfde"/></svg>
<div class="r" style="left:52px;top:636px;width:574px;height:1px;background:#d8d8d8;"></div>
<div class="t " style="left:57.8px;top:581.25px;font-size:16.85px;line-height:20.22px;color:#444444;">Industry</div>
<svg class="r" style="left:602px;top:606.5px;" width="18" height="18" viewBox="0 0 18 18"><path d="M1 17 L2.5 12 L6 15.5 Z" fill="#e0dfde"/><path d="M3.5 11 L12.5 2 L16 5.5 L7 14.5 Z" fill="#e0dfde"/><path d="M13.5 1 L15 -0.5 L18.5 3 L17 4.5Z" fill="#e0dfde"/></svg>
<div class="r" style="left:52px;top:700px;width:574px;height:1px;background:#d8d8d8;"></div>
<div class="t " style="left:57.8px;top:645.45px;font-size:16.85px;line-height:20.22px;color:#444444;">Annual Revenue</div>
<svg class="r" style="left:602px;top:670.7px;" width="18" height="18" viewBox="0 0 18 18"><path d="M1 17 L2.5 12 L6 15.5 Z" fill="#e0dfde"/><path d="M3.5 11 L12.5 2 L16 5.5 L7 14.5 Z" fill="#e0dfde"/><path d="M13.5 1 L15 -0.5 L18.5 3 L17 4.5Z" fill="#e0dfde"/></svg>
<div class="r" style="left:52px;top:764px;width:574px;height:1px;background:#d8d8d8;"></div>
<div class="t " style="left:57.8px;top:709.65px;font-size:16.85px;line-height:20.22px;color:#444444;">Important Notes</div>
<svg class="r" style="left:602px;top:734.9px;" width="18" height="18" viewBox="0 0 18 18"><path d="M1 17 L2.5 12 L6 15.5 Z" fill="#e0dfde"/><path d="M3.5 11 L12.5 2 L16 5.5 L7 14.5 Z" fill="#e0dfde"/><path d="M13.5 1 L15 -0.5 L18.5 3 L17 4.5Z" fill="#e0dfde"/></svg>
<div class="r" style="left:658px;top:443px;width:573px;height:1px;background:#d8d8d8;"></div>
<div class="t " style="left:663.7px;top:388.45px;font-size:16.85px;line-height:20.22px;color:#444444;">Phone</div>
<div class="t " style="left:663.7px;top:416.43px;font-size:19.2px;line-height:23.04px;color:#2966c9;">312-696-6000</div>
<svg class="r" style="left:1206.5px;top:413.7px;" width="18" height="18" viewBox="0 0 18 18"><path d="M1 17 L2.5 12 L6 15.5 Z" fill="#e0dfde"/><path d="M3.5 11 L12.5 2 L16 5.5 L7 14.5 Z" fill="#e0dfde"/><path d="M13.5 1 L15 -0.5 L18.5 3 L17 4.5Z" fill="#e0dfde"/></svg>
<div class="r" style="left:658px;top:507px;width:573px;height:1px;background:#d8d8d8;"></div>
<div class="t " style="left:663.7px;top:452.75px;font-size:16.85px;line-height:20.22px;color:#444444;">Website</div>
<svg class="r" style="left:1206.5px;top:478.0px;" width="18" height="18" viewBox="0 0 18 18"><path d="M1 17 L2.5 12 L6 15.5 Z" fill="#e0dfde"/><path d="M3.5 11 L12.5 2 L16 5.5 L7 14.5 Z" fill="#e0dfde"/><path d="M13.5 1 L15 -0.5 L18.5 3 L17 4.5Z" fill="#e0dfde"/></svg>
<div class="r" style="left:658px;top:572px;width:573px;height:1px;background:#d8d8d8;"></div>
<div class="t " style="left:663.7px;top:517.25px;font-size:16.85px;line-height:20.22px;color:#444444;">Employees</div>
<svg class="r" style="left:1206.5px;top:542.5px;" width="18" height="18" viewBox="0 0 18 18"><path d="M1 17 L2.5 12 L6 15.5 Z" fill="#e0dfde"/><path d="M3.5 11 L12.5 2 L16 5.5 L7 14.5 Z" fill="#e0dfde"/><path d="M13.5 1 L15 -0.5 L18.5 3 L17 4.5Z" fill="#e0dfde"/></svg>
<div class="r" style="left:37px;top:787.2px;width:1209px;height:41.3px;background:#f3f3f3;border-radius:4px;"></div>
<svg class="r" style="left:50px;top:274px;display:none" width="20" height="13" viewBox="0 0 20 13"></svg>
<svg class="r" style="left:50px;top:801.85px;" width="20" height="13" viewBox="0 0 20 13"><path d="M1.5 1.5 L10 10 L18.5 1.5" fill="none" stroke="#706e6b" stroke-width="2.2"/></svg>
<div class="t " style="left:81.7px;top:795.97px;font-size:21.9px;line-height:26.28px;color:#080707;">Financial Summary</div>
<div class="r" style="left:52px;top:903px;width:574px;height:1px;background:#d8d8d8;"></div>
<div class="t " style="left:57.8px;top:849.65px;font-size:16.85px;line-height:20.22px;color:#444444;">Total Financial Accounts</div>
<div class="t " style="left:57.8px;top:877.23px;font-size:19.2px;line-height:23.04px;color:#181818;">$0.00</div>
<div class="r" style="left:52px;top:968px;width:574px;height:1px;background:#d8d8d8;"></div>
<div class="t " style="left:57.8px;top:914.15px;font-size:16.85px;line-height:20.22px;color:#444444;">Total Bank Deposits</div>
<div class="t " style="left:57.8px;top:941.73px;font-size:19.2px;line-height:23.04px;color:#181818;">$0.00</div>
<div class="r" style="left:52px;top:1032px;width:574px;height:1px;background:#d8d8d8;"></div>
<div class="t " style="left:57.8px;top:978.15px;font-size:16.85px;line-height:20.22px;color:#444444;">AUM</div>
<div class="t " style="left:57.8px;top:1005.73px;font-size:19.2px;line-height:23.04px;color:#181818;">$0.00</div>
<div class="r" style="left:658px;top:903px;width:573px;height:1px;background:#d8d8d8;"></div>
<div class="t " style="left:663.7px;top:849.65px;font-size:16.85px;line-height:20.22px;color:#444444;">Total Investments</div>
<div class="t " style="left:663.7px;top:877.23px;font-size:19.2px;line-height:23.04px;color:#181818;">$0.00</div>
<div class="r" style="left:658px;top:968px;width:573px;height:1px;background:#d8d8d8;"></div>
<div class="t " style="left:663.7px;top:914.15px;font-size:16.85px;line-height:20.22px;color:#444444;">Total Insurance</div>
<div class="t " style="left:663.7px;top:941.73px;font-size:19.2px;line-height:23.04px;color:#181818;">$0.00</div>
<div class="r" style="left:658px;top:1032px;width:573px;height:1px;background:#d8d8d8;"></div>
<div class="t " style="left:663.7px;top:978.15px;font-size:16.85px;line-height:20.22px;color:#444444;">Wallet Share</div>
<div class="t " style="left:663.7px;top:1005.73px;font-size:19.2px;line-height:23.04px;color:#181818;">0%</div>
<div class="r" style="left:37px;top:1055.3px;width:1209px;height:41.0px;background:#f3f3f3;border-radius:4px;"></div>
<svg class="r" style="left:50px;top:274px;display:none" width="20" height="13" viewBox="0 0 20 13"></svg>
<svg class="r" style="left:50px;top:1069.8px;" width="20" height="13" viewBox="0 0 20 13"><path d="M1.5 1.5 L10 10 L18.5 1.5" fill="none" stroke="#706e6b" stroke-width="2.2"/></svg>
<div class="t " style="left:81.7px;top:1064.07px;font-size:21.9px;line-height:26.28px;color:#080707;">Address Information</div>
<div class="r" style="left:52px;top:1407px;width:574px;height:1px;background:#d8d8d8;"></div>
<div class="r" style="left:658px;top:1407px;width:573px;height:1px;background:#d8d8d8;"></div>
<div class="t " style="left:57.8px;top:1116.85px;font-size:16.85px;line-height:20.22px;color:#444444;">Billing Address</div>
<div class="t " style="left:663.7px;top:1116.85px;font-size:16.85px;line-height:20.22px;color:#444444;">Shipping Address</div>
<div class="t " style="left:57.8px;top:1144.93px;font-size:19.2px;line-height:23.04px;color:#2966c9;">22 W. Washington St.</div>
<div class="t " style="left:57.8px;top:1172.93px;font-size:19.2px;line-height:23.04px;color:#2966c9;">Chicago, IL 60602</div>
<svg class="r" style="left:602px;top:1142.5px;" width="18" height="18" viewBox="0 0 18 18"><path d="M1 17 L2.5 12 L6 15.5 Z" fill="#e0dfde"/><path d="M3.5 11 L12.5 2 L16 5.5 L7 14.5 Z" fill="#e0dfde"/><path d="M13.5 1 L15 -0.5 L18.5 3 L17 4.5Z" fill="#e0dfde"/></svg>
<svg class="r" style="left:1206.5px;top:1142.5px;" width="18" height="18" viewBox="0 0 18 18"><path d="M1 17 L2.5 12 L6 15.5 Z" fill="#e0dfde"/><path d="M3.5 11 L12.5 2 L16 5.5 L7 14.5 Z" fill="#e0dfde"/><path d="M13.5 1 L15 -0.5 L18.5 3 L17 4.5Z" fill="#e0dfde"/></svg>
<svg class="r" style="left:58px;top:1198px;" width="400" height="200" viewBox="0 0 400 200"><defs><clipPath id="mc"><rect width="400" height="200"/></clipPath></defs><g clip-path="url(#mc)"><rect width="400" height="200" fill="#e9e9ea"/><rect x="117" y="0" width="22" height="12" fill="#fbf1cf"/><rect x="140" y="0" width="18" height="12" fill="#fbf1cf"/><rect x="162" y="2" width="18" height="8" fill="#fbf1cf"/><rect x="117" y="18" width="20" height="20" fill="#fbf1cf"/><rect x="178" y="18" width="18" height="22" fill="#fbf1cf"/><rect x="120" y="22" width="12" height="12" fill="#fbf1cf"/><rect x="204" y="0" width="16" height="10" fill="#fbf1cf"/><rect x="204" y="14" width="16" height="24" fill="#fbf1cf"/><rect x="228" y="0" width="16" height="10" fill="#fbf1cf"/><rect x="228" y="14" width="16" height="24" fill="#fbf1cf"/><rect x="0" y="70" width="12" height="12" fill="#fbf1cf"/><rect x="24" y="86" width="14" height="22" fill="#fbf1cf"/><rect x="24" y="115" width="12" height="14" fill="#fbf1cf"/><rect x="48" y="140" width="14" height="20" fill="#fbf1cf"/><rect x="72" y="120" width="10" height="16" fill="#fbf1cf"/><rect x="72" y="145" width="10" height="24" fill="#fbf1cf"/><rect x="24" y="165" width="14" height="20" fill="#fbf1cf"/><rect x="205" y="100" width="14" height="12" fill="#fbf1cf"/><rect x="228" y="98" width="18" height="18" fill="#fbf1cf"/><rect x="252" y="102" width="18" height="14" fill="#fbf1cf"/><rect x="255" y="120" width="16" height="24" fill="#fbf1cf"/><rect x="228" y="145" width="16" height="14" fill="#fbf1cf"/><rect x="205" y="165" width="14" height="20" fill="#fbf1cf"/><rect x="250" y="165" width="18" height="20" fill="#fbf1cf"/><rect x="280" y="70" width="14" height="12" fill="#fbf1cf"/><rect x="280" y="100" width="12" height="30" fill="#fbf1cf"/><rect x="160" y="188" width="14" height="12" fill="#fbf1cf"/><rect x="255" y="190" width="20" height="10" fill="#fbf1cf"/><rect x="308" y="112" width="92" height="88" fill="#cdebd3"/><rect x="0" y="17" width="13" height="7" fill="#cdebd3"/><path d="M262 52 Q280 40 300 30 L400 25 L400 45 L300 50 Q285 55 275 60Z" fill="#cdebd3" opacity="0.7"/><g stroke="#fafafa" fill="none"><path d="M0 15 H400" stroke-width="3.2"/><path d="M0 35.6 H400" stroke-width="3.2"/><path d="M0 59.4 H400" stroke-width="3.2"/><path d="M0 83.2 H400" stroke-width="3.2"/><path d="M0 110 H400" stroke-width="3.2"/><path d="M0 136 H400" stroke-width="3.2"/><path d="M0 162 H400" stroke-width="3.2"/><path d="M0 190 H400" stroke-width="3.2"/><path d="M16 0 V200" stroke-width="3.2"/><path d="M40.5 0 V200" stroke-width="3.2"/><path d="M69 0 V200" stroke-width="3.2"/><path d="M110 0 V200" stroke-width="3.2"/><path d="M135 0 V200" stroke-width="3.2"/><path d="M155.5 0 V200" stroke-width="3.2"/><path d="M177.7 0 V200" stroke-width="3.2"/><path d="M199 0 V200" stroke-width="3.2"/><path d="M224 0 V200" stroke-width="3.2"/><path d="M248 0 V200" stroke-width="3.2"/><path d="M274 0 V200" stroke-width="3.2"/><path d="M299.7 0 V200" stroke-width="3.2"/><path d="M336 0 V200" stroke-width="3.2"/><path d="M359.6 0 V200" stroke-width="3.2"/><path d="M382.6 0 V200" stroke-width="3.2"/><path d="M0 24 H400" stroke-width="1.4"/><path d="M0 47 H400" stroke-width="1.4"/><path d="M0 71 H400" stroke-width="1.4"/><path d="M0 96 H400" stroke-width="1.4"/><path d="M0 123 H400" stroke-width="1.4"/><path d="M0 149 H400" stroke-width="1.4"/><path d="M0 176 H400" stroke-width="1.4"/><path d="M28 0 V200" stroke-width="1.2"/><path d="M55 0 V200" stroke-width="1.2"/><path d="M90 0 V200" stroke-width="1.2"/><path d="M122 0 V200" stroke-width="1.2"/><path d="M145 0 V200" stroke-width="1.2"/><path d="M166 0 V200" stroke-width="1.2"/><path d="M188 0 V200" stroke-width="1.2"/><path d="M211 0 V200" stroke-width="1.2"/><path d="M236 0 V200" stroke-width="1.2"/><path d="M261 0 V200" stroke-width="1.2"/><path d="M287 0 V200" stroke-width="1.2"/><path d="M318 0 V200" stroke-width="1.2"/><path d="M348 0 V200" stroke-width="1.2"/><path d="M371 0 V200" stroke-width="1.2"/><path d="M392 0 V200" stroke-width="1.2"/><path d="M110 15 L135 59 M262 59 Q275 35 300 34" stroke-width="4"/></g><path d="M25 0 Q50 20 49 50 L49 200" fill="none" stroke="#d6d7d9" stroke-width="8"/><path d="M274 83 V200" stroke="#d6d7d9" stroke-width="2.5"/><path d="M0 83.2 H280" stroke="#dadbdd" stroke-width="2"/><path d="M61 0 L74 0 Q80 30 97 52 Q104 58 125 46 L127 53 Q110 72 102 83 Q97 120 93 200 L82 200 Q86 120 89 83 Q84 62 74 44 Q64 20 61 0Z" fill="#aecbfa"/><path d="M125 41 H262 L262 52 H125Z" fill="#aecbfa"/><path d="M262 41 Q285 30 300 22 Q340 12 400 12 L400 30 Q340 30 305 38 Q285 46 268 53 L262 53Z" fill="#aecbfa"/><path d="M66 0 Q75 40 92 60 Q97 80 90 200 M96 60 Q110 55 125 46 H262 Q290 30 310 25 Q350 20 400 20" fill="none" stroke="#8fb3ee" stroke-width="0.8" stroke-dasharray="4 3"/><text x="74" y="18" font-size="13" fill="#5f6368" font-family="Liberation Sans">W Kinzie St</text><text x="137" y="66" font-size="13" fill="#5f6368" font-family="Liberation Sans">W Wacker Dr</text><text x="315" y="118.5" font-size="13" fill="#5f6368" font-family="Liberation Sans"><tspan font-style="italic">E</tspan> Randolph St</text><text x="59" y="58.6" font-size="12.5" fill="#5f6368" font-family="Liberation Sans" transform="rotate(90 59 58.6)">N Canal St</text><text x="150.5" y="75" font-size="12.5" fill="#5f6368" font-family="Liberation Sans" transform="rotate(90 150.5 75)">N Wells St</text><text x="172.5" y="75" font-size="12.5" fill="#5f6368" font-family="Liberation Sans" transform="rotate(90 172.5 75)">N LaSalle St</text><text x="318.5" y="34.8" font-size="16.5" fill="#188038" font-family="Liberation Sans">Chicago</text><text x="313" y="51.5" font-size="16.5" fill="#188038" font-family="Liberation Sans">Riverwalk</text><text x="332.5" y="190" font-size="16.5" fill="#1e8e9e" font-family="Liberation Sans">The Art I</text><text x="298" y="80" letter-spacing="4.2" font-size="17" fill="#6f7c99" font-weight="bold" font-family="Liberation Sans">NEW EAS</text><text x="309" y="144" letter-spacing="4.6" font-size="17" fill="#6f7c99" font-weight="bold" font-family="Liberation Sans">MILLENI</text><text x="351" y="163" letter-spacing="4.6" font-size="17" fill="#6f7c99" font-weight="bold" font-family="Liberation Sans">PAR</text><text x="45.5" y="177" letter-spacing="4.6" font-size="17" fill="#6f7c99" font-weight="bold" font-family="Liberation Sans">WEST</text><text x="12" y="195.7" letter-spacing="4.6" font-size="17" fill="#6f7c99" font-weight="bold" font-family="Liberation Sans">LOOP GATE</text><circle cx="314" cy="187" r="13" fill="#3d9aa8"/><path d="M307 190 H321 M308 185 H320 L314 181Z" stroke="#fff" stroke-width="1.5" fill="#fff"/><rect x="146.5" y="7.7" width="16.5" height="16.5" rx="2.5" fill="#3e70d6" stroke="#fff" stroke-width="0.8"/><text x="154.75" y="20.7" font-size="12" font-weight="bold" fill="#fff" text-anchor="middle" font-family="Liberation Sans">M</text><rect x="25.7" y="76" width="16.5" height="16.5" rx="2.5" fill="#3e70d6" stroke="#fff" stroke-width="0.8"/><text x="33.95" y="89" font-size="12" font-weight="bold" fill="#fff" text-anchor="middle" font-family="Liberation Sans">M</text><rect x="148" y="141.5" width="16.5" height="16.5" rx="2.5" fill="#3e70d6" stroke="#fff" stroke-width="0.8"/><text x="156.25" y="154.5" font-size="12" font-weight="bold" fill="#fff" text-anchor="middle" font-family="Liberation Sans">M</text><rect x="240.5" y="73" width="16.5" height="16.5" rx="2.5" fill="#3e70d6" stroke="#fff" stroke-width="0.8"/><text x="248.75" y="86" font-size="12" font-weight="bold" fill="#fff" text-anchor="middle" font-family="Liberation Sans">M</text><rect x="219" y="117.7" width="16.5" height="16.5" rx="2.5" fill="#3e70d6" stroke="#fff" stroke-width="0.8"/><text x="227.25" y="130.7" font-size="12" font-weight="bold" fill="#fff" text-anchor="middle" font-family="Liberation Sans">M</text><rect x="267.6" y="143" width="16.5" height="16.5" rx="2.5" fill="#3e70d6" stroke="#fff" stroke-width="0.8"/><text x="275.85" y="156" font-size="12" font-weight="bold" fill="#fff" text-anchor="middle" font-family="Liberation Sans">M</text><rect x="243.8" y="180" width="16.5" height="16.5" rx="2.5" fill="#3e70d6" stroke="#fff" stroke-width="0.8"/><text x="252.05" y="193" font-size="12" font-weight="bold" fill="#fff" text-anchor="middle" font-family="Liberation Sans">M</text><rect x="218" y="192.5" width="16.5" height="16.5" rx="2.5" fill="#3e70d6" stroke="#fff" stroke-width="0.8"/><text x="226.25" y="205.5" font-size="12" font-weight="bold" fill="#fff" text-anchor="middle" font-family="Liberation Sans">M</text><rect x="187" y="74" width="16.5" height="16.5" rx="2.5" fill="#3e70d6" stroke="#fff" stroke-width="0.8"/><text x="195.25" y="87" font-size="12" font-weight="bold" fill="#fff" text-anchor="middle" font-family="Liberation Sans">M</text><rect x="45.5" y="129" width="16.5" height="16.5" rx="2.5" fill="#3e70d6" stroke="#fff" stroke-width="0.8"/><rect x="49.5" y="133" width="8.5" height="7" rx="2" fill="#fff"/><circle cx="51.5" cy="138.5" r="0.9" fill="#3e70d6"/><circle cx="56.0" cy="138.5" r="0.9" fill="#3e70d6"/><rect x="291.5" y="103.8" width="16.5" height="16.5" rx="2.5" fill="#3e70d6" stroke="#fff" stroke-width="0.8"/><rect x="295.5" y="107.8" width="8.5" height="7" rx="2" fill="#fff"/><circle cx="297.5" cy="113.3" r="0.9" fill="#3e70d6"/><circle cx="302.0" cy="113.3" r="0.9" fill="#3e70d6"/><path d="M236.4 76 C226.5 76 219 83.5 219 93 C219 101 224 106 229 113 C233 119 235.5 125 236.4 133 C237.3 125 239.8 119 243.8 113 C248.8 106 253.8 101 253.8 93 C253.8 83.5 246.3 76 236.4 76Z" fill="#d9543a" stroke="#b33d2a" stroke-width="0.6"/><circle cx="236.4" cy="93" r="5.6" fill="#a8372a"/></g></svg>
<div class="r" style="left:37px;top:1430px;width:1209px;height:41.2px;background:#f3f3f3;border-radius:4px;"></div>
<svg class="r" style="left:50px;top:274px;display:none" width="20" height="13" viewBox="0 0 20 13"></svg>
<svg class="r" style="left:50px;top:1444.6px;" width="20" height="13" viewBox="0 0 20 13"><path d="M1.5 1.5 L10 10 L18.5 1.5" fill="none" stroke="#706e6b" stroke-width="2.2"/></svg>
<div class="t " style="left:81.7px;top:1438.77px;font-size:21.9px;line-height:26.28px;color:#080707;">Referral Information</div>
<div class="r" style="left:52px;top:1547px;width:574px;height:1px;background:#d8d8d8;"></div>
<div class="t " style="left:57.8px;top:1492.25px;font-size:16.85px;line-height:20.22px;color:#444444;">Internal Referrer</div>
<svg class="r" style="left:602px;top:1517.5px;" width="18" height="18" viewBox="0 0 18 18"><path d="M1 17 L2.5 12 L6 15.5 Z" fill="#e0dfde"/><path d="M3.5 11 L12.5 2 L16 5.5 L7 14.5 Z" fill="#e0dfde"/><path d="M13.5 1 L15 -0.5 L18.5 3 L17 4.5Z" fill="#e0dfde"/></svg>
<div class="r" style="left:658px;top:1547px;width:573px;height:1px;background:#d8d8d8;"></div>
<div class="t " style="left:663.7px;top:1492.25px;font-size:16.85px;line-height:20.22px;color:#444444;">External Referrer</div>
<svg class="r" style="left:1206.5px;top:1517.5px;" width="18" height="18" viewBox="0 0 18 18"><path d="M1 17 L2.5 12 L6 15.5 Z" fill="#e0dfde"/><path d="M3.5 11 L12.5 2 L16 5.5 L7 14.5 Z" fill="#e0dfde"/><path d="M13.5 1 L15 -0.5 L18.5 3 L17 4.5Z" fill="#e0dfde"/></svg>
<div class="r" style="left:37px;top:1570px;width:1209px;height:41.5px;background:#f3f3f3;border-radius:4px;"></div>
<svg class="r" style="left:50px;top:274px;display:none" width="20" height="13" viewBox="0 0 20 13"></svg>
<svg class="r" style="left:50px;top:1584.75px;" width="20" height="13" viewBox="0 0 20 13"><path d="M1.5 1.5 L10 10 L18.5 1.5" fill="none" stroke="#706e6b" stroke-width="2.2"/></svg>
<div class="t " style="left:81.7px;top:1578.77px;font-size:21.9px;line-height:26.28px;color:#080707;">System Information</div>
<div class="r" style="left:52px;top:1691px;width:574px;height:1px;background:#d8d8d8;"></div>
<div class="t " style="left:57.8px;top:1632.15px;font-size:16.85px;line-height:20.22px;color:#444444;">Created By</div>
<svg class="r" style="left:57.8px;top:1661.5px;" width="26" height="26" viewBox="0 0 26 26"><circle cx="13" cy="13" r="12.8" fill="#e6e9ef" stroke="#d5e3ee" stroke-width="0.5"/><path d="M4.5 11 Q4.5 4.5 13 4.5 Q21.5 4.5 21.5 11 L21.5 17 Q21.5 25 13 25 Q4.5 25 4.5 17Z" fill="#a6b4d2"/><ellipse cx="7" cy="5.8" rx="1.6" ry="2.6" fill="#4c5f8f"/><ellipse cx="19.2" cy="5.8" rx="1.6" ry="2.6" fill="#4c5f8f"/><ellipse cx="13" cy="16" rx="7" ry="6.5" fill="#4c5f8f"/><ellipse cx="13" cy="17.3" rx="6.3" ry="4.9" fill="#fff"/><ellipse cx="10.4" cy="17" rx="0.8" ry="1.2" fill="#4c5f8f"/><ellipse cx="15.8" cy="17" rx="0.8" ry="1.2" fill="#4c5f8f"/><path d="M10.5 25 Q13 21.5 15.5 25Z" fill="#4c5f8f"/></svg>
<div class="t " style="left:89.6px;top:1661.28px;font-size:19.57px;line-height:23.48px;color:#2966c9;"><span style="border-bottom:1px dotted rgba(41,102,201,0.55);">Office Cloud Integration Admin</span><span style="color:#181818;font-size:19.1px;position:relative;top:-1px;">, 12/6/2021, 11:37 AM</span></div>
<div class="r" style="left:658px;top:1691px;width:573px;height:1px;background:#d8d8d8;"></div>
<div class="t " style="left:663.7px;top:1632.15px;font-size:16.85px;line-height:20.22px;color:#444444;">Last Modified By</div>
<svg class="r" style="left:663.7px;top:1661.5px;" width="26" height="26" viewBox="0 0 26 26"><circle cx="13" cy="13" r="12.8" fill="#e6e9ef" stroke="#d5e3ee" stroke-width="0.5"/><path d="M4.5 11 Q4.5 4.5 13 4.5 Q21.5 4.5 21.5 11 L21.5 17 Q21.5 25 13 25 Q4.5 25 4.5 17Z" fill="#a6b4d2"/><ellipse cx="7" cy="5.8" rx="1.6" ry="2.6" fill="#4c5f8f"/><ellipse cx="19.2" cy="5.8" rx="1.6" ry="2.6" fill="#4c5f8f"/><ellipse cx="13" cy="16" rx="7" ry="6.5" fill="#4c5f8f"/><ellipse cx="13" cy="17.3" rx="6.3" ry="4.9" fill="#fff"/><ellipse cx="10.4" cy="17" rx="0.8" ry="1.2" fill="#4c5f8f"/><ellipse cx="15.8" cy="17" rx="0.8" ry="1.2" fill="#4c5f8f"/><path d="M10.5 25 Q13 21.5 15.5 25Z" fill="#4c5f8f"/></svg>
<div class="t " style="left:695.5px;top:1661.28px;font-size:19.57px;line-height:23.48px;color:#2966c9;"><span style="border-bottom:1px dotted rgba(41,102,201,0.55);">Office Cloud Integration Admin</span><span style="color:#181818;font-size:19.1px;position:relative;top:-1px;">, 12/6/2021, 11:46 AM</span></div>
<div class="r" style="left:37px;top:1714px;width:1209px;height:41.8px;background:#f3f3f3;border-radius:4px;"></div>
<svg class="r" style="left:50px;top:274px;display:none" width="20" height="13" viewBox="0 0 20 13"></svg>
<svg class="r" style="left:50px;top:1728.9px;" width="20" height="13" viewBox="0 0 20 13"><path d="M1.5 1.5 L10 10 L18.5 1.5" fill="none" stroke="#706e6b" stroke-width="2.2"/></svg>
<div class="t " style="left:81.7px;top:1722.77px;font-size:21.9px;line-height:26.28px;color:#080707;">Description Information</div>
<div class="r" style="left:52px;top:1828px;width:1179px;height:1px;background:#d8d8d8;"></div>
<div class="t " style="left:57.8px;top:1775.85px;font-size:16.85px;line-height:20.22px;color:#444444;">Description</div>
<svg class="r" style="left:1206.5px;top:1800.5px;" width="18" height="18" viewBox="0 0 18 18"><path d="M1 17 L2.5 12 L6 15.5 Z" fill="#e0dfde"/><path d="M3.5 11 L12.5 2 L16 5.5 L7 14.5 Z" fill="#e0dfde"/><path d="M13.5 1 L15 -0.5 L18.5 3 L17 4.5Z" fill="#e0dfde"/></svg>
<div class="card" style="left:1286px;top:241px;width:2581px;height:993px;"></div>
<div class="t " style="right:67px;top:269.26px;font-size:18.43px;line-height:22.12px;color:#2966c9;">Morningstar Office Client or Prospect</div>
<svg class="r" style="left:3826px;top:271.3px;" width="19" height="19" viewBox="0 0 19 19"><path d="M1.8 17.2 L16 3" stroke="#2966c9" stroke-width="3"/><path d="M3.5 2 H17 V15.5" fill="none" stroke="#2966c9" stroke-width="3"/></svg>
<div class="t " style="left:1324.8px;top:317.38px;font-size:17.56px;line-height:21.07px;color:#080707;font-weight:bold;">Accounts</div>
<div class="t " style="left:1437.5px;top:316.85px;font-size:18.12px;line-height:21.74px;color:#3e3e3c;">Account Analysis</div>
<div class="r" style="left:1308px;top:352px;width:2538px;height:1px;background:#d8d8d8;"></div>
<div class="r" style="left:1308px;top:349px;width:113px;height:3.5px;background:#5a8ce8;"></div>
<div class="r" style="left:3803px;top:369px;width:43px;height:42px;border:1px solid #dddbda;border-radius:6px;background:#fff;box-sizing:border-box;"></div>
<svg class="r" style="left:3813.5px;top:379.0px;" width="22" height="22" viewBox="0 0 22 22"><path d="M15.2 6.3 A7.2 7.2 0 1 0 15.9 15.2" fill="none" stroke="#706e6b" stroke-width="2.3"/><path d="M11.4 9.6 H17.8 V3.2" fill="none" stroke="#706e6b" stroke-width="2.3"/></svg>
<svg class="r" style="left:1364.2px;top:411.5px;" width="420" height="420" viewBox="0 0 420 420"><path d="M210.00 5.50 A204.5 204.5 0 1 1 57.77 346.55 L141.14 271.76 A92.5 92.5 0 1 0 210.00 117.50Z" fill="#3253a2" stroke="#fff" stroke-width="1"/><path d="M57.77 346.55 A204.5 204.5 0 0 1 30.62 111.80 L128.86 165.58 A92.5 92.5 0 0 0 141.14 271.76Z" fill="#677db8" stroke="#fff" stroke-width="1"/><path d="M30.62 111.80 A204.5 204.5 0 0 1 133.29 20.43 L175.30 124.25 A92.5 92.5 0 0 0 128.86 165.58Z" fill="#dd7f35" stroke="#fff" stroke-width="1"/><path d="M133.29 20.43 A204.5 204.5 0 0 1 198.44 5.83 L204.77 117.65 A92.5 92.5 0 0 0 175.30 124.25Z" fill="#5d8432" stroke="#fff" stroke-width="1"/><path d="M198.44 5.83 A204.5 204.5 0 0 1 210.00 5.50 L210.00 117.50 A92.5 92.5 0 0 0 204.77 117.65Z" fill="#e9c83a" stroke="#fff" stroke-width="1"/></svg>
<svg class="r" style="left:1840.8px;top:549.5px;" width="14.4" height="14.4" viewBox="0 0 14.4 14.4"><circle cx="7.2" cy="7.2" r="7.2" fill="#3253a2"/></svg>
<div class="t " style="left:1868.8px;top:546.42px;font-size:19.0px;line-height:22.8px;color:#5c5c5c;">US Stock</div>
<div class="t " style="right:1407px;top:546.83px;font-size:18.14px;line-height:21.77px;color:#181818;">63.37</div>
<svg class="r" style="left:1840.8px;top:582.86px;" width="14.4" height="14.4" viewBox="0 0 14.4 14.4"><circle cx="7.2" cy="7.2" r="7.2" fill="#677db8"/></svg>
<div class="t " style="left:1868.8px;top:579.78px;font-size:19.0px;line-height:22.8px;color:#5c5c5c;">Non-US Stock</div>
<div class="t " style="right:1407px;top:580.19px;font-size:18.14px;line-height:21.77px;color:#181818;">19.61</div>
<svg class="r" style="left:1840.8px;top:616.22px;" width="14.4" height="14.4" viewBox="0 0 14.4 14.4"><circle cx="7.2" cy="7.2" r="7.2" fill="#dd7f35"/></svg>
<div class="t " style="left:1868.8px;top:613.14px;font-size:19.0px;line-height:22.8px;color:#5c5c5c;">Bond</div>
<div class="t " style="right:1407px;top:613.55px;font-size:18.14px;line-height:21.77px;color:#181818;">10.91</div>
<svg class="r" style="left:1840.8px;top:649.58px;" width="14.4" height="14.4" viewBox="0 0 14.4 14.4"><circle cx="7.2" cy="7.2" r="7.2" fill="#5d8432"/></svg>
<div class="t " style="left:1868.8px;top:646.5px;font-size:19.0px;line-height:22.8px;color:#5c5c5c;">Cash</div>
<div class="t " style="right:1407px;top:646.91px;font-size:18.14px;line-height:21.77px;color:#181818;">5.22</div>
<svg class="r" style="left:1840.8px;top:682.94px;" width="14.4" height="14.4" viewBox="0 0 14.4 14.4"><circle cx="7.2" cy="7.2" r="7.2" fill="#e9c83a"/></svg>
<div class="t " style="left:1868.8px;top:679.86px;font-size:19.0px;line-height:22.8px;color:#5c5c5c;">Other</div>
<div class="t " style="right:1407px;top:680.27px;font-size:18.14px;line-height:21.77px;color:#181818;">0.90</div>
<svg class="r" style="left:1840.8px;top:716.3px;" width="14.4" height="14.4" viewBox="0 0 14.4 14.4"><circle cx="7.2" cy="7.2" r="7.2" fill="#6b6b6b"/></svg>
<div class="t " style="left:1868.8px;top:713.22px;font-size:19.0px;line-height:22.8px;color:#5c5c5c;">Not Classified</div>
<div class="t " style="right:1407px;top:713.63px;font-size:18.14px;line-height:21.77px;color:#181818;">0.00</div>
<div class="t " style="right:1407px;top:776.47px;font-size:14.08px;line-height:16.9px;color:#181818;">Date: 12/05/2021</div>
<div class="r" style="left:1308px;top:913px;width:2538px;height:1px;background:#d8d8d8;"></div>
<div class="t " style="left:1319px;top:875.36px;font-size:17.9px;line-height:21.48px;color:#080707;font-weight:bold;">Account name</div>
<div class="t " style="left:1764.4px;top:875.36px;font-size:17.9px;line-height:21.48px;color:#080707;font-weight:bold;">Account Number</div>
<div class="t " style="left:2023px;top:875.36px;font-size:17.9px;line-height:21.48px;color:#080707;font-weight:bold;">Account type</div>
<div class="t " style="left:2234.5px;top:875.36px;font-size:17.9px;line-height:21.48px;color:#080707;font-weight:bold;">Current Custodian</div>
<div class="t " style="right:1003.4px;top:875.36px;font-size:17.9px;line-height:21.48px;color:#080707;font-weight:bold;">Market Value (USD)</div>
<div class="t " style="right:726px;top:875.36px;font-size:17.9px;line-height:21.48px;color:#080707;font-weight:bold;">Market Value Date</div>
<div class="t " style="right:490px;top:875.36px;font-size:17.9px;line-height:21.48px;color:#080707;font-weight:bold;">Owner</div>
<div class="t " style="left:3414.5px;top:875.36px;font-size:17.9px;line-height:21.48px;color:#080707;font-weight:bold;">Exclude from Client Aggregate</div>
<div class="r" style="left:1308px;top:972px;width:2538px;height:1px;background:#d8d8d8;"></div>
<svg class="r" style="left:1324px;top:938.3px;" width="11" height="16" viewBox="0 0 11 16"><path d="M1.5 1.2 L9 8 L1.5 14.8" fill="none" stroke="#706e6b" stroke-width="2.1"/></svg>
<div class="t " style="left:1339.7px;top:933.93px;font-size:18.14px;line-height:21.77px;color:#181818;">Cash</div>
<div class="t " style="left:1764.4px;top:933.93px;font-size:18.14px;line-height:21.77px;color:#181818;">-</div>
<div class="t " style="left:2023px;top:933.93px;font-size:18.14px;line-height:21.77px;color:#181818;">Taxable</div>
<div class="t " style="left:2234.5px;top:933.93px;font-size:18.14px;line-height:21.77px;color:#181818;">-</div>
<div class="t " style="right:1003.4px;top:933.93px;font-size:18.14px;line-height:21.77px;color:#181818;">5,000.00</div>
<div class="t " style="right:726px;top:933.93px;font-size:18.14px;line-height:21.77px;color:#181818;">12/5/2021</div>
<div class="t " style="right:490px;top:933.93px;font-size:18.14px;line-height:21.77px;color:#181818;">Multiple</div>
<div class="t " style="left:3414.5px;top:933.93px;font-size:18.14px;line-height:21.77px;color:#181818;">No</div>
<div class="r" style="left:1308px;top:1031px;width:2538px;height:1px;background:#d8d8d8;"></div>
<svg class="r" style="left:1324px;top:997.3px;" width="11" height="16" viewBox="0 0 11 16"><path d="M1.5 1.2 L9 8 L1.5 14.8" fill="none" stroke="#706e6b" stroke-width="2.1"/></svg>
<div class="t " style="left:1339.7px;top:992.93px;font-size:18.14px;line-height:21.77px;color:#181818;">Sample Quick Account</div>
<div class="t " style="left:1764.4px;top:992.93px;font-size:18.14px;line-height:21.77px;color:#181818;">-</div>
<div class="t " style="left:2023px;top:992.93px;font-size:18.14px;line-height:21.77px;color:#181818;">Taxable</div>
<div class="t " style="left:2234.5px;top:992.93px;font-size:18.14px;line-height:21.77px;color:#181818;">-</div>
<div class="t " style="right:1003.4px;top:992.93px;font-size:18.14px;line-height:21.77px;color:#181818;">344,112.10</div>
<div class="t " style="right:726px;top:992.93px;font-size:18.14px;line-height:21.77px;color:#181818;">12/5/2021</div>
<div class="t " style="right:490px;top:992.93px;font-size:18.14px;line-height:21.77px;color:#181818;">Client, Sample</div>
<div class="t " style="left:3414.5px;top:992.93px;font-size:18.14px;line-height:21.77px;color:#181818;">No</div>
<div class="r" style="left:1308px;top:1090px;width:2538px;height:1px;background:#d8d8d8;"></div>
<svg class="r" style="left:1324px;top:1056px;" width="11" height="16" viewBox="0 0 11 16"><path d="M1.5 1.2 L9 8 L1.5 14.8" fill="none" stroke="#706e6b" stroke-width="2.1"/></svg>
<div class="t " style="left:1339.7px;top:1051.63px;font-size:18.14px;line-height:21.77px;color:#181818;">Sample Roth IRA Account</div>
<div class="t " style="left:1764.4px;top:1051.63px;font-size:18.14px;line-height:21.77px;color:#181818;">20081004</div>
<div class="t " style="left:2023px;top:1051.63px;font-size:18.14px;line-height:21.77px;color:#181818;">Roth IRA</div>
<div class="t " style="left:2234.5px;top:1051.63px;font-size:18.14px;line-height:21.77px;color:#181818;">TD Ameritrade Institutional</div>
<div class="t " style="right:1003.4px;top:1051.63px;font-size:18.14px;line-height:21.77px;color:#181818;">45,757.62</div>
<div class="t " style="right:726px;top:1051.63px;font-size:18.14px;line-height:21.77px;color:#181818;">12/5/2021</div>
<div class="t " style="right:490px;top:1051.63px;font-size:18.14px;line-height:21.77px;color:#181818;">Client, Sample</div>
<div class="t " style="left:3414.5px;top:1051.63px;font-size:18.14px;line-height:21.77px;color:#181818;">Yes</div>
<div class="r" style="left:1308px;top:1149px;width:2538px;height:1px;background:#d8d8d8;"></div>
<svg class="r" style="left:1324px;top:1115px;" width="11" height="16" viewBox="0 0 11 16"><path d="M1.5 1.2 L9 8 L1.5 14.8" fill="none" stroke="#706e6b" stroke-width="2.1"/></svg>
<div class="t " style="left:1339.7px;top:1110.63px;font-size:18.14px;line-height:21.77px;color:#181818;">Sample Transactional Account</div>
<div class="t " style="left:1764.4px;top:1110.63px;font-size:18.14px;line-height:21.77px;color:#181818;">20082002</div>
<div class="t " style="left:2023px;top:1110.63px;font-size:18.14px;line-height:21.77px;color:#181818;">Taxable</div>
<div class="t " style="left:2234.5px;top:1110.63px;font-size:18.14px;line-height:21.77px;color:#181818;">-</div>
<div class="t " style="right:1003.4px;top:1110.63px;font-size:18.14px;line-height:21.77px;color:#181818;">806,989.79</div>
<div class="t " style="right:726px;top:1110.63px;font-size:18.14px;line-height:21.77px;color:#181818;">12/5/2021</div>
<div class="t " style="right:490px;top:1110.63px;font-size:18.14px;line-height:21.77px;color:#181818;">Spouse, Sample</div>
<div class="t " style="left:3414.5px;top:1110.63px;font-size:18.14px;line-height:21.77px;color:#181818;">No</div>
<div class="t " style="left:1308.6px;top:1153.97px;font-size:18.1px;line-height:21.72px;color:#080707;"><b>Total Market Value:</b> 1,156,101.88</div>
<div class="t " style="left:2577px;transform:translateX(-50%);top:1180.27px;font-size:17.99px;line-height:21.59px;color:#181818;font-style:italic;">Latest Office sync: 12/6/2021, 11:23:27 AM CST</div>
<div class="card" style="left:1286px;top:1251px;width:2581px;height:603px;"></div>
<div class="t " style="right:67px;top:1280.26px;font-size:18.43px;line-height:22.12px;color:#2966c9;">Morningstar Office Client or Prospect</div>
<svg class="r" style="left:3826px;top:1282.3px;" width="19" height="19" viewBox="0 0 19 19"><path d="M1.8 17.2 L16 3" stroke="#2966c9" stroke-width="3"/><path d="M3.5 2 H17 V15.5" fill="none" stroke="#2966c9" stroke-width="3"/></svg>
<div class="t " style="left:1324.6px;top:1327.39px;font-size:17.87px;line-height:21.44px;color:#080707;font-weight:bold;">Reports</div>
<div class="r" style="left:1308px;top:1362px;width:2538px;height:1px;background:#d8d8d8;"></div>
<div class="r" style="left:1308px;top:1360px;width:100px;height:3.5px;background:#5a8ce8;"></div>
<div class="r" style="left:3731.5px;top:1378.3px;width:58.8px;height:43.7px;border:1px solid #dddbda;border-radius:6px;background:#fff;box-sizing:border-box;box-shadow:0 0 1.5px 1px #9fc1ef;"></div>
<svg class="r" style="left:3744.3px;top:1394.3px;" width="16" height="16" viewBox="0 0 16 16"><g transform="translate(8,8)"><rect x="-2.6" y="-8" width="5.2" height="5" rx="1" fill="#2966c9" transform="rotate(0)"/><rect x="-2.6" y="-8" width="5.2" height="5" rx="1" fill="#2966c9" transform="rotate(60)"/><rect x="-2.6" y="-8" width="5.2" height="5" rx="1" fill="#2966c9" transform="rotate(120)"/><rect x="-2.6" y="-8" width="5.2" height="5" rx="1" fill="#2966c9" transform="rotate(180)"/><rect x="-2.6" y="-8" width="5.2" height="5" rx="1" fill="#2966c9" transform="rotate(240)"/><rect x="-2.6" y="-8" width="5.2" height="5" rx="1" fill="#2966c9" transform="rotate(300)"/><circle cx="0" cy="0" r="6" fill="#2966c9"/><circle cx="0" cy="0" r="3.6" fill="#fff"/><circle cx="0" cy="0" r="2.4" fill="#2966c9"/></g></svg>
<svg class="r" style="left:3768.3px;top:1399.6px;" width="8" height="6" viewBox="0 0 8 6"><path d="M0 0 H8 L4 5.4Z" fill="#2966c9"/></svg>
<div class="r" style="left:3803px;top:1379px;width:43px;height:43px;border:1px solid #dddbda;border-radius:6px;background:#fff;box-sizing:border-box;"></div>
<svg class="r" style="left:3813.5px;top:1389.5px;" width="22" height="22" viewBox="0 0 22 22"><path d="M15.2 6.3 A7.2 7.2 0 1 0 15.9 15.2" fill="none" stroke="#706e6b" stroke-width="2.3"/><path d="M11.4 9.6 H17.8 V3.2" fill="none" stroke="#706e6b" stroke-width="2.3"/></svg>
<div class="r" style="left:1308px;top:1429.4px;width:2537.5px;height:41px;border:1px solid #d6d6d6;border-radius:5px;background:#fff;box-sizing:border-box;"></div>
<svg class="r" style="left:1324.6px;top:1441px;" width="18" height="18" viewBox="0 0 18 18"><circle cx="7.2" cy="7.2" r="5.6" fill="none" stroke="#939393" stroke-width="1.9"/><path d="M11.3 11.3 L16.6 16.6" stroke="#939393" stroke-width="2"/></svg>
<div class="t " style="left:1352px;top:1440.2px;font-size:18.07px;line-height:21.68px;color:#747474;">Search for reports by File Name</div>
<div class="r" style="left:1308px;top:1498px;width:2538px;height:43px;background:#fafaf9;"></div>
<div class="r" style="left:1308px;top:1541px;width:2538px;height:1px;background:#d8d8d8;"></div>
<div class="r" style="left:1707px;top:1498px;width:1px;height:43px;background:#dddbda;"></div>
<div class="r" style="left:2051px;top:1498px;width:1px;height:43px;background:#dddbda;"></div>
<div class="r" style="left:2395px;top:1498px;width:1px;height:43px;background:#dddbda;"></div>
<div class="r" style="left:2739px;top:1498px;width:1px;height:43px;background:#dddbda;"></div>
<div class="r" style="left:3083px;top:1498px;width:1px;height:43px;background:#dddbda;"></div>
<div class="r" style="left:3427px;top:1498px;width:1px;height:43px;background:#dddbda;"></div>
<div class="r" style="left:3771px;top:1498px;width:1px;height:43px;background:#dddbda;"></div>
<div class="t " style="left:1319px;top:1509.45px;font-size:17.8px;line-height:21.36px;color:#444444;font-weight:bold;">File Name</div>
<div class="t " style="left:1719.2px;top:1509.45px;font-size:17.8px;line-height:21.36px;color:#444444;font-weight:bold;">Type</div>
<div class="t " style="left:2063.2px;top:1509.45px;font-size:17.8px;line-height:21.36px;color:#444444;font-weight:bold;">Target</div>
<div class="t " style="left:2407.4px;top:1509.45px;font-size:17.8px;line-height:21.36px;color:#444444;font-weight:bold;">Report Level</div>
<div class="t " style="left:2751.2px;top:1509.45px;font-size:17.8px;line-height:21.36px;color:#444444;font-weight:bold;">Created Date</div>
<div class="t " style="left:3095px;top:1509.45px;font-size:17.8px;line-height:21.36px;color:#444444;font-weight:bold;">Format</div>
<div class="t " style="left:3438.9px;top:1509.45px;font-size:17.8px;line-height:21.36px;color:#444444;font-weight:bold;">Published Date</div>
<div class="r" style="left:3839px;top:1542px;width:7px;height:279px;background:#fafaf9;"></div>
<svg class="r" style="left:2871.5px;top:1512.5px;" width="12" height="15" viewBox="0 0 12 15"><path d="M6 1 V13.5 M1.5 9 L6 13.5 L10.5 9" fill="none" stroke="#444" stroke-width="2"/></svg>
<div class="r" style="left:1308px;top:1580px;width:2531px;height:1px;background:#d8d8d8;"></div>
<svg class="r" style="left:1321px;top:1552.0px;" width="18" height="22" viewBox="0 0 18 22"><path d="M5.6 0.9 H11.2 V5.2 Q11.2 6.7 12.7 6.7 H16.9 V15.1 Q16.9 16.6 15.4 16.6 H5.6 Q4.1 16.6 4.1 15.1 V2.4 Q4.1 0.9 5.6 0.9Z" fill="#706e6b"/><path d="M13.3 0.9 L16.9 4.5 H13.3Z" fill="#706e6b"/><path d="M1 4.8 V18 Q1 19.6 2.6 19.6 H12.6" fill="none" stroke="#706e6b" stroke-width="2" stroke-linecap="round"/></svg>
<div class="t " style="left:1355px;top:1551.11px;font-size:17.95px;line-height:21.54px;color:#181818;">Client_PerformanceSummary_11-23-2021</div>
<div class="t " style="left:1719.2px;top:1551.11px;font-size:17.95px;line-height:21.54px;color:#181818;">Performance Summary</div>
<div class="t " style="left:2063.2px;top:1551.11px;font-size:17.95px;line-height:21.54px;color:#181818;">Sample Transactional Account</div>
<div class="t " style="left:2407.4px;top:1551.11px;font-size:17.95px;line-height:21.54px;color:#181818;">Account</div>
<div class="t " style="left:2751.2px;top:1551.11px;font-size:17.95px;line-height:21.54px;color:#181818;">11/23/2021, 13:40:03</div>
<div class="t " style="left:3095px;top:1551.11px;font-size:17.95px;line-height:21.54px;color:#181818;">PDF</div>
<div class="t " style="left:3438.9px;top:1551.11px;font-size:17.95px;line-height:21.54px;color:#181818;">11/23/2021, 15:03:00</div>
<div class="r" style="left:3792px;top:1548.0px;width:27px;height:27px;border:1px solid #dddbda;border-radius:5px;background:#fff;box-sizing:border-box;"></div>
<svg class="r" style="left:3799px;top:1559.0px;" width="12" height="8" viewBox="0 0 12 8"><path d="M0 0 H12 L6 7.5Z" fill="#706e6b"/></svg>
<div class="r" style="left:1308px;top:1620px;width:2531px;height:1px;background:#d8d8d8;"></div>
<svg class="r" style="left:1321px;top:1591.9px;" width="18" height="22" viewBox="0 0 18 22"><path d="M5.6 0.9 H11.2 V5.2 Q11.2 6.7 12.7 6.7 H16.9 V15.1 Q16.9 16.6 15.4 16.6 H5.6 Q4.1 16.6 4.1 15.1 V2.4 Q4.1 0.9 5.6 0.9Z" fill="#706e6b"/><path d="M13.3 0.9 L16.9 4.5 H13.3Z" fill="#706e6b"/><path d="M1 4.8 V18 Q1 19.6 2.6 19.6 H12.6" fill="none" stroke="#706e6b" stroke-width="2" stroke-linecap="round"/></svg>
<div class="t " style="left:1355px;top:1591.01px;font-size:17.95px;line-height:21.54px;color:#181818;">Client_StockIntersection_11-23-2021</div>
<div class="t " style="left:1719.2px;top:1591.01px;font-size:17.95px;line-height:21.54px;color:#181818;">Stock Intersection</div>
<div class="t " style="left:2063.2px;top:1591.01px;font-size:17.95px;line-height:21.54px;color:#181818;">Sample Roth IRA Account</div>
<div class="t " style="left:2407.4px;top:1591.01px;font-size:17.95px;line-height:21.54px;color:#181818;">Account</div>
<div class="t " style="left:2751.2px;top:1591.01px;font-size:17.95px;line-height:21.54px;color:#181818;">11/23/2021, 13:39:37</div>
<div class="t " style="left:3095px;top:1591.01px;font-size:17.95px;line-height:21.54px;color:#181818;">PDF</div>
<div class="t " style="left:3438.9px;top:1591.01px;font-size:17.95px;line-height:21.54px;color:#181818;">11/23/2021, 13:41:00</div>
<div class="r" style="left:3792px;top:1587.9px;width:27px;height:27px;border:1px solid #dddbda;border-radius:5px;background:#fff;box-sizing:border-box;"></div>
<svg class="r" style="left:3799px;top:1598.9px;" width="12" height="8" viewBox="0 0 12 8"><path d="M0 0 H12 L6 7.5Z" fill="#706e6b"/></svg>
<div class="r" style="left:1308px;top:1660px;width:2531px;height:1px;background:#d8d8d8;"></div>
<svg class="r" style="left:1321px;top:1631.8000000000002px;" width="18" height="22" viewBox="0 0 18 22"><path d="M5.6 0.9 H11.2 V5.2 Q11.2 6.7 12.7 6.7 H16.9 V15.1 Q16.9 16.6 15.4 16.6 H5.6 Q4.1 16.6 4.1 15.1 V2.4 Q4.1 0.9 5.6 0.9Z" fill="#706e6b"/><path d="M13.3 0.9 L16.9 4.5 H13.3Z" fill="#706e6b"/><path d="M1 4.8 V18 Q1 19.6 2.6 19.6 H12.6" fill="none" stroke="#706e6b" stroke-width="2" stroke-linecap="round"/></svg>
<div class="t " style="left:1355px;top:1630.91px;font-size:17.95px;line-height:21.54px;color:#181818;">Client_X-Ray_11-23-2021</div>
<div class="t " style="left:1719.2px;top:1630.91px;font-size:17.95px;line-height:21.54px;color:#181818;">X-Ray</div>
<div class="t " style="left:2063.2px;top:1630.91px;font-size:17.95px;line-height:21.54px;color:#181818;">Sample Quick Account</div>
<div class="t " style="left:2407.4px;top:1630.91px;font-size:17.95px;line-height:21.54px;color:#181818;">Account</div>
<div class="t " style="left:2751.2px;top:1630.91px;font-size:17.95px;line-height:21.54px;color:#181818;">11/23/2021, 13:39:22</div>
<div class="t " style="left:3095px;top:1630.91px;font-size:17.95px;line-height:21.54px;color:#181818;">PDF</div>
<div class="t " style="left:3438.9px;top:1630.91px;font-size:17.95px;line-height:21.54px;color:#181818;">12/06/2021, 13:46:00</div>
<div class="r" style="left:3792px;top:1627.8000000000002px;width:27px;height:27px;border:1px solid #dddbda;border-radius:5px;background:#fff;box-sizing:border-box;"></div>
<svg class="r" style="left:3799px;top:1638.8000000000002px;" width="12" height="8" viewBox="0 0 12 8"><path d="M0 0 H12 L6 7.5Z" fill="#706e6b"/></svg>
<div class="r" style="left:1308px;top:1700px;width:2531px;height:1px;background:#d8d8d8;"></div>
<svg class="r" style="left:1321px;top:1671.8000000000002px;" width="18" height="22" viewBox="0 0 18 22"><path d="M5.6 0.9 H11.2 V5.2 Q11.2 6.7 12.7 6.7 H16.9 V15.1 Q16.9 16.6 15.4 16.6 H5.6 Q4.1 16.6 4.1 15.1 V2.4 Q4.1 0.9 5.6 0.9Z" fill="#706e6b"/><path d="M13.3 0.9 L16.9 4.5 H13.3Z" fill="#706e6b"/><path d="M1 4.8 V18 Q1 19.6 2.6 19.6 H12.6" fill="none" stroke="#706e6b" stroke-width="2" stroke-linecap="round"/></svg>
<div class="t " style="left:1355px;top:1670.91px;font-size:17.95px;line-height:21.54px;color:#181818;">Client_Snapshot_11-23-2021</div>
<div class="t " style="left:1719.2px;top:1670.91px;font-size:17.95px;line-height:21.54px;color:#181818;">Snapshot</div>
<div class="t " style="left:2063.2px;top:1670.91px;font-size:17.95px;line-height:21.54px;color:#181818;">Sample Client OCI</div>
<div class="t " style="left:2407.4px;top:1670.91px;font-size:17.95px;line-height:21.54px;color:#181818;">Client</div>
<div class="t " style="left:2751.2px;top:1670.91px;font-size:17.95px;line-height:21.54px;color:#181818;">11/23/2021, 13:39:04</div>
<div class="t " style="left:3095px;top:1670.91px;font-size:17.95px;line-height:21.54px;color:#181818;">PDF</div>
<div class="t " style="left:3438.9px;top:1670.91px;font-size:17.95px;line-height:21.54px;color:#181818;">12/06/2021, 13:46:00</div>
<div class="r" style="left:3792px;top:1667.8000000000002px;width:27px;height:27px;border:1px solid #dddbda;border-radius:5px;background:#fff;box-sizing:border-box;"></div>
<svg class="r" style="left:3799px;top:1678.8000000000002px;" width="12" height="8" viewBox="0 0 12 8"><path d="M0 0 H12 L6 7.5Z" fill="#706e6b"/></svg>
<div class="r" style="left:1308px;top:1740px;width:2531px;height:1px;background:#d8d8d8;"></div>
<svg class="r" style="left:1321px;top:1712.0px;" width="18" height="22" viewBox="0 0 18 22"><path d="M5.6 0.9 H11.2 V5.2 Q11.2 6.7 12.7 6.7 H16.9 V15.1 Q16.9 16.6 15.4 16.6 H5.6 Q4.1 16.6 4.1 15.1 V2.4 Q4.1 0.9 5.6 0.9Z" fill="#706e6b"/><path d="M13.3 0.9 L16.9 4.5 H13.3Z" fill="#706e6b"/><path d="M1 4.8 V18 Q1 19.6 2.6 19.6 H12.6" fill="none" stroke="#706e6b" stroke-width="2" stroke-linecap="round"/></svg>
<div class="t " style="left:1355px;top:1711.11px;font-size:17.95px;line-height:21.54px;color:#181818;">Client_StockIntersection_01-14-2021</div>
<div class="t " style="left:1719.2px;top:1711.11px;font-size:17.95px;line-height:21.54px;color:#181818;">Stock Intersection</div>
<div class="t " style="left:2063.2px;top:1711.11px;font-size:17.95px;line-height:21.54px;color:#181818;">Sample Client OCI</div>
<div class="t " style="left:2407.4px;top:1711.11px;font-size:17.95px;line-height:21.54px;color:#181818;">Client</div>
<div class="t " style="left:2751.2px;top:1711.11px;font-size:17.95px;line-height:21.54px;color:#181818;">01/14/2021, 15:31:58</div>
<div class="t " style="left:3095px;top:1711.11px;font-size:17.95px;line-height:21.54px;color:#181818;">PDF</div>
<div class="t " style="left:3438.9px;top:1711.11px;font-size:17.95px;line-height:21.54px;color:#181818;">12/06/2021, 13:46:00</div>
<div class="r" style="left:3792px;top:1708.0px;width:27px;height:27px;border:1px solid #dddbda;border-radius:5px;background:#fff;box-sizing:border-box;"></div>
<svg class="r" style="left:3799px;top:1719.0px;" width="12" height="8" viewBox="0 0 12 8"><path d="M0 0 H12 L6 7.5Z" fill="#706e6b"/></svg>
<div class="r" style="left:1308px;top:1780px;width:2531px;height:1px;background:#d8d8d8;"></div>
<svg class="r" style="left:1321px;top:1752.0px;" width="18" height="22" viewBox="0 0 18 22"><path d="M5.6 0.9 H11.2 V5.2 Q11.2 6.7 12.7 6.7 H16.9 V15.1 Q16.9 16.6 15.4 16.6 H5.6 Q4.1 16.6 4.1 15.1 V2.4 Q4.1 0.9 5.6 0.9Z" fill="#706e6b"/><path d="M13.3 0.9 L16.9 4.5 H13.3Z" fill="#706e6b"/><path d="M1 4.8 V18 Q1 19.6 2.6 19.6 H12.6" fill="none" stroke="#706e6b" stroke-width="2" stroke-linecap="round"/></svg>
<div class="t " style="left:1355px;top:1751.11px;font-size:17.95px;line-height:21.54px;color:#181818;">Client_UnrealizedGainLoss_01-14-2021</div>
<div class="t " style="left:1719.2px;top:1751.11px;font-size:17.95px;line-height:21.54px;color:#181818;">Portfolio Unrealized Gains/Losses</div>
<div class="t " style="left:2063.2px;top:1751.11px;font-size:17.95px;line-height:21.54px;color:#181818;">Sample Client OCI</div>
<div class="t " style="left:2407.4px;top:1751.11px;font-size:17.95px;line-height:21.54px;color:#181818;">Client</div>
<div class="t " style="left:2751.2px;top:1751.11px;font-size:17.95px;line-height:21.54px;color:#181818;">01/14/2021, 15:28:00</div>
<div class="t " style="left:3095px;top:1751.11px;font-size:17.95px;line-height:21.54px;color:#181818;">PDF</div>
<div class="r" style="left:3792px;top:1748.0px;width:27px;height:27px;border:1px solid #dddbda;border-radius:5px;background:#fff;box-sizing:border-box;"></div>
<svg class="r" style="left:3799px;top:1759.0px;" width="12" height="8" viewBox="0 0 12 8"><path d="M0 0 H12 L6 7.5Z" fill="#706e6b"/></svg>
<div class="r" style="left:1308px;top:1820px;width:2531px;height:1px;background:#d8d8d8;"></div>
<svg class="r" style="left:1321px;top:1791.7px;" width="18" height="22" viewBox="0 0 18 22"><path d="M5.6 0.9 H11.2 V5.2 Q11.2 6.7 12.7 6.7 H16.9 V15.1 Q16.9 16.6 15.4 16.6 H5.6 Q4.1 16.6 4.1 15.1 V2.4 Q4.1 0.9 5.6 0.9Z" fill="#706e6b"/><path d="M13.3 0.9 L16.9 4.5 H13.3Z" fill="#706e6b"/><path d="M1 4.8 V18 Q1 19.6 2.6 19.6 H12.6" fill="none" stroke="#706e6b" stroke-width="2" stroke-linecap="round"/></svg>
<div class="t " style="left:1355px;top:1790.81px;font-size:17.95px;line-height:21.54px;color:#181818;">Client_X-Ray_01-14-2021</div>
<div class="t " style="left:1719.2px;top:1790.81px;font-size:17.95px;line-height:21.54px;color:#181818;">X-Ray</div>
<div class="t " style="left:2063.2px;top:1790.81px;font-size:17.95px;line-height:21.54px;color:#181818;">Sample Client OCI</div>
<div class="t " style="left:2407.4px;top:1790.81px;font-size:17.95px;line-height:21.54px;color:#181818;">Client</div>
<div class="t " style="left:2751.2px;top:1790.81px;font-size:17.95px;line-height:21.54px;color:#181818;">01/14/2021, 15:27:36</div>
<div class="t " style="left:3095px;top:1790.81px;font-size:17.95px;line-height:21.54px;color:#181818;">PDF</div>
<div class="r" style="left:3792px;top:1787.7px;width:27px;height:27px;border:1px solid #dddbda;border-radius:5px;background:#fff;box-sizing:border-box;"></div>
<svg class="r" style="left:3799px;top:1798.7px;" width="12" height="8" viewBox="0 0 12 8"><path d="M0 0 H12 L6 7.5Z" fill="#706e6b"/></svg>
</div></body></html>
